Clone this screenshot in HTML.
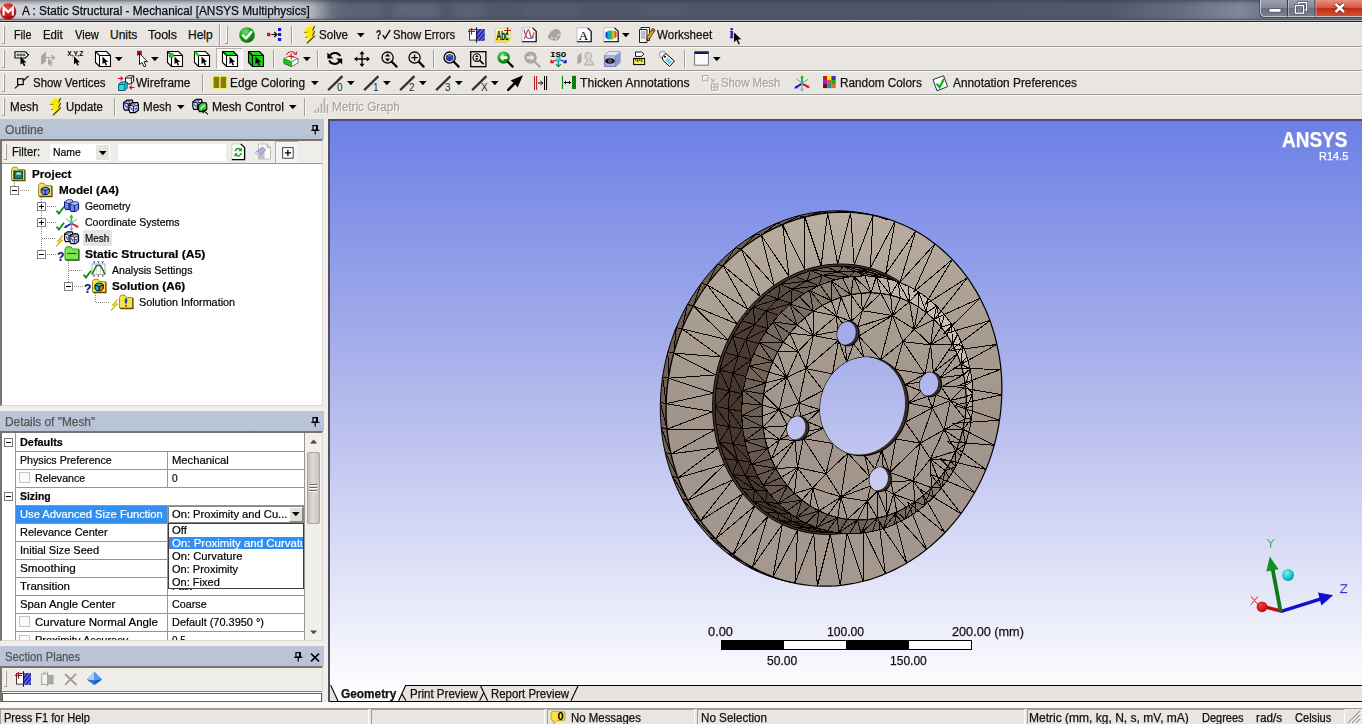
<!DOCTYPE html>
<html><head><meta charset="utf-8"><title>A : Static Structural - Mechanical [ANSYS Multiphysics]</title>
<style>
html,body{margin:0;padding:0;}
body{width:1362px;height:724px;overflow:hidden;position:relative;background:#e9e6e1;font-family:"Liberation Sans",sans-serif;font-size:12px;color:#000;}
.a{position:absolute;}
.t{-webkit-text-stroke:.25px currentColor;position:absolute;white-space:nowrap;line-height:14px;height:14px;font-size:12px;color:#111;transform-origin:0 0;}
.g{color:#a9a6a2;}
.tr{-webkit-text-stroke:.2px currentColor;position:absolute;white-space:nowrap;line-height:13px;height:13px;font-size:11px;color:#000;transform-origin:0 0;}
.b{font-weight:bold;}
.hl{position:absolute;left:0;width:1362px;height:1px;}
.dd{position:absolute;width:0;height:0;border-left:3.5px solid transparent;border-right:3.5px solid transparent;border-top:4px solid #000;}
.vs{position:absolute;width:1px;height:18px;background:#a5a19c;border-right:1px solid #fff;}
.grip{position:absolute;width:2px;height:19px;border-left:1px solid #fff;border-right:1px solid #9a9691;box-sizing:border-box;}
svg{position:absolute;overflow:visible;}
</style></head><body>
<!-- title bar placeholder -->
<!-- toolbars bg -->
<div class="a" style="left:0;top:22px;width:1362px;height:97px;background:#e9e6e1;"></div>
<div class="hl" style="top:46px;background:#9c9893;"></div><div class="hl" style="top:47px;background:#fbfaf9;"></div>
<div class="hl" style="top:70px;background:#9c9893;"></div><div class="hl" style="top:71px;background:#fbfaf9;"></div>
<div class="hl" style="top:94px;background:#9c9893;"></div><div class="hl" style="top:95px;background:#fbfaf9;"></div>
<!-- viewport -->
<div class="a" style="left:328px;top:119px;width:1034px;height:583px;background:#5c5868;"></div>
<div class="a" id="vp" style="left:330px;top:120px;width:1032px;height:566px;background:linear-gradient(180deg,#6a7be3 0%,#8b97e8 25%,#a9b2ee 50%,#cdd2f5 75%,#f4f5fd 96%,#fbfbff 100%);"></div>
<!-- tabs strip -->
<div class="a" style="left:330px;top:686px;width:1032px;height:1px;background:#1a1a1a;"></div>
<div class="a" style="left:330px;top:687px;width:1032px;height:14px;background:#e9e6e1;"></div>
<div class="a" style="left:330px;top:701px;width:1032px;height:1px;background:#1a1a1a;"></div>
<!-- left panel -->
<div class="a" style="left:0;top:119px;width:328px;height:583px;background:#f1efec;"></div>
<div class="a" style="left:0;top:119px;width:324px;height:20px;background:linear-gradient(180deg,#bcc5d6 0,#bbc5d8 50%,#b8c2d5 100%);"></div>
<div class="a" style="left:0;top:139px;width:323px;height:267px;background:#fff;border-left:2px solid #7a726c;border-top:2px solid #7a726c;border-right:1px solid #dcd8d4;border-bottom:1px solid #dcd8d4;box-sizing:border-box;"></div>
<div class="a" style="left:2px;top:141px;width:320px;height:22px;background:#efede9;"></div>
<div class="a" style="left:2px;top:163px;width:320px;height:1px;background:#9a9590;"></div>
<div class="a" style="left:0;top:411px;width:324px;height:20px;background:linear-gradient(180deg,#bcc5d6 0,#bbc5d8 50%,#b8c2d5 100%);"></div>
<div class="a" style="left:0;top:431px;width:323px;height:210px;background:#fff;border-left:2px solid #7a726c;border-top:2px solid #7a726c;border-right:1px solid #dcd8d4;border-bottom:1px solid #dcd8d4;box-sizing:border-box;"></div>
<div class="a" style="left:0;top:646px;width:324px;height:20px;background:linear-gradient(180deg,#bcc5d6 0,#bbc5d8 50%,#b8c2d5 100%);"></div>
<div class="a" style="left:0;top:666px;width:323px;height:36px;background:#efede9;border-left:2px solid #7a726c;border-top:2px solid #7a726c;border-right:1px solid #dcd8d4;box-sizing:border-box;"></div>
<div class="a" style="left:2px;top:691px;width:320px;height:1px;background:#8a827c;"></div><div class="a" style="left:2px;top:692px;width:320px;height:1px;background:#fbfaf9;"></div>
<div class="a" style="left:2px;top:693px;width:320px;height:9px;background:#fff;border:1px solid #6a625c;box-sizing:border-box;"></div>
<!-- status bar -->
<div class="a" style="left:0;top:702px;width:1362px;height:22px;background:#e9e6e1;"></div>
<div class="a" style="left:0;top:0;width:1362px;height:21px;background:linear-gradient(90deg,#555d70 0,#505768 500px,#4e5567 900px,#505869 1110px,#666d7e 1180px,#828898 1240px,#70778a 1262px);"></div><div class="a" style="left:345px;top:3px;width:40px;height:15px;border-radius:8px;background:rgba(160,170,195,0.16);filter:blur(4px);"></div><div class="a" style="left:392px;top:3px;width:48px;height:15px;border-radius:8px;background:rgba(160,170,195,0.2);filter:blur(4px);"></div><div class="a" style="left:452px;top:3px;width:34px;height:15px;border-radius:8px;background:rgba(160,170,195,0.14);filter:blur(4px);"></div><div class="a" style="left:520px;top:3px;width:60px;height:15px;border-radius:8px;background:rgba(160,170,195,0.08);filter:blur(4px);"></div><div class="a" style="left:640px;top:3px;width:50px;height:15px;border-radius:8px;background:rgba(160,170,195,0.06);filter:blur(4px);"></div><div class="a" style="left:0;top:0;width:352px;height:21px;background:linear-gradient(90deg,rgba(208,210,216,1) 0,rgba(210,212,218,1) 150px,rgba(200,203,210,1) 290px,rgba(190,193,202,.85) 312px,rgba(150,155,170,.35) 332px,rgba(120,128,145,0) 352px);"></div><div class="a" style="left:0;top:0;width:1362px;height:21px;background:linear-gradient(180deg,rgba(50,56,76,.55) 0,rgba(60,66,86,.18) 3px,rgba(60,66,86,0) 6px,rgba(60,66,86,0) 16px,rgba(50,54,70,.25) 20px);"></div><div class="hl" style="top:19px;background:rgba(86,87,98,.8);"></div><div class="hl" style="top:20px;background:#b0b0b6;"></div><div class="hl" style="top:21px;background:#222024;"></div><div class="hl" style="top:22px;background:#f6f2f0;"></div><svg style="left:0px;top:3px" width="17" height="17" viewBox="0 0 17 17"><defs><radialGradient id="gApp" cx="40%" cy="30%" r="75%"><stop offset="0" stop-color="#f05048"/><stop offset=".6" stop-color="#d01818"/><stop offset="1" stop-color="#900808"/></radialGradient></defs><circle cx="8.2" cy="8.4" r="8.1" fill="url(#gApp)"/><path d="M3.6 12.4V4.6L8.2 9L12.8 4.6V12.4" stroke="#fff" stroke-width="2.2" fill="none" stroke-linejoin="miter"/></svg>
<div class="t" style="left:22.00px;top:4px;transform:scaleX(0.9829);color:#0a0a10;">A : Static Structural - Mechanical [ANSYS Multiphysics]</div>
<svg style="left:1258px;top:0" width="104" height="20" viewBox="0 0 104 20">
<defs><linearGradient id="gBtn" x1="0" y1="0" x2="0" y2="1"><stop offset="0" stop-color="#9aa0ac"/><stop offset=".45" stop-color="#848a98"/><stop offset=".5" stop-color="#6a7080"/><stop offset="1" stop-color="#7a8090"/></linearGradient>
<linearGradient id="gCls" x1="0" y1="0" x2="0" y2="1"><stop offset="0" stop-color="#e89080"/><stop offset=".45" stop-color="#d45a44"/><stop offset=".5" stop-color="#c02c14"/><stop offset="1" stop-color="#d8502c"/></linearGradient></defs>
<path d="M1.5 -1V13Q1.5 17.5 6 17.5H104V-1Z" fill="#2a2e3a"/>
<path d="M2.5 0V13Q2.5 16.5 6 16.5H57V0Z" fill="url(#gBtn)"/>
<path d="M57 0H104V16.5H57Z" fill="url(#gCls)"/>
<path d="M2.5 0V13Q2.5 16.5 6 16.5H104" fill="none" stroke="#d4d8e0" stroke-width="1" opacity=".85"/>
<path d="M29.5 0V16.5M57 0V16.5" stroke="#3a3e4a" stroke-width="1"/><path d="M30.5 0V16M58 0V16" stroke="#c8ccd4" stroke-width="1" opacity=".6"/>
<rect x="11" y="8.6" width="12" height="3.6" fill="#fff" stroke="#444a58" stroke-width=".8"/>
<rect x="40.4" y="2.6" width="8.2" height="7.6" fill="none" stroke="#444a58" stroke-width="2.6"/><rect x="40.4" y="2.6" width="8.2" height="7.6" fill="none" stroke="#fff" stroke-width="1.3"/>
<rect x="37.4" y="5.6" width="8.2" height="7.6" fill="#7a8090" stroke="#444a58" stroke-width="2.6"/><rect x="37.4" y="5.6" width="8.2" height="7.6" fill="none" stroke="#fff" stroke-width="1.3"/>
<path d="M77.6 4L86 12M86 4L77.6 12" stroke="#5a2018" stroke-width="4.2"/><path d="M77.6 4L86 12M86 4L77.6 12" stroke="#fff" stroke-width="2.6"/>
</svg>
<svg width="0" height="0" style="left:0;top:0"><defs>
<radialGradient id="gGreen" cx="40%" cy="30%" r="75%"><stop offset="0" stop-color="#6fe06f"/><stop offset=".55" stop-color="#18a018"/><stop offset="1" stop-color="#056005"/></radialGradient>
<radialGradient id="gGray" cx="40%" cy="30%" r="75%"><stop offset="0" stop-color="#c4c1bd"/><stop offset="1" stop-color="#9f9b97"/></radialGradient>
<linearGradient id="gBolt" x1="0" y1="0" x2="1" y2="1"><stop offset="0" stop-color="#fff64a"/><stop offset="1" stop-color="#e8d000"/></linearGradient>
<linearGradient id="gCont" x1="0" y1="0" x2="1" y2="0"><stop offset="0" stop-color="#1020d0"/><stop offset=".3" stop-color="#10b0e0"/><stop offset=".5" stop-color="#20c040"/><stop offset=".7" stop-color="#e0d020"/><stop offset="1" stop-color="#e02010"/></linearGradient>
<pattern id="hatch" width="3" height="3" patternUnits="userSpaceOnUse" patternTransform="rotate(40)"><rect width="3" height="3" fill="#1c1cb0"/><rect width="1.2" height="3" fill="#7c7cf0"/></pattern>
</defs></svg>
<div class="a" style="left:3px;top:26px;width:1px;height:18px;background:#fdfdfc;"></div><div class="a" style="left:4px;top:26px;width:1px;height:18px;background:#a09c97;"></div><div class="a" style="left:2px;top:43px;width:3px;height:1px;background:#a09c97;"></div>
<div class="t" style="left:14.00px;top:28px;transform:scaleX(0.9000);">File</div>
<div class="t" style="left:43.00px;top:28px;transform:scaleX(0.9524);">Edit</div>
<div class="t" style="left:75.00px;top:28px;transform:scaleX(0.9231);">View</div>
<div class="t" style="left:110.00px;top:28px;transform:scaleX(1.0000);">Units</div>
<div class="t" style="left:148.00px;top:28px;transform:scaleX(1.0357);">Tools</div>
<div class="t" style="left:188.00px;top:28px;transform:scaleX(1.0000);">Help</div>
<div class="a" style="left:219px;top:24px;width:1px;height:22px;background:#a29e99;"></div><div class="a" style="left:220px;top:24px;width:1px;height:22px;background:#fbfaf9;"></div>
<div class="a" style="left:226px;top:26px;width:1px;height:18px;background:#fdfdfc;"></div><div class="a" style="left:227px;top:26px;width:1px;height:18px;background:#a09c97;"></div><div class="a" style="left:225px;top:43px;width:3px;height:1px;background:#a09c97;"></div>
<svg style="left:239px;top:27px" width="16" height="16" viewBox="0 0 16 16"><circle cx="8" cy="8" r="7.8" fill="url(#gGreen)"/><path d="M4 8.4L7 11.4L12.4 5" stroke="#fff" stroke-width="2.4" fill="none" stroke-linecap="round" stroke-linejoin="round"/></svg>
<svg style="left:265px;top:27px" width="18" height="16" viewBox="0 0 18 16"><rect x="2" y="5.8" width="3.4" height="3.4" fill="#e01010"/><path d="M6.4 7.5H11.6M9.2 5L11.8 7.5L9.2 10" stroke="#000" stroke-width="1.2" fill="none"/><rect x="13" y="1" width="3.2" height="3" fill="#1212d2"/><rect x="13" y="6" width="3.2" height="3" fill="#1212d2"/><rect x="13" y="11" width="3.2" height="3" fill="#1212d2"/></svg>
<div class="a" style="left:291px;top:26px;width:1px;height:18px;background:#a29e99;"></div><div class="a" style="left:292px;top:26px;width:1px;height:18px;background:#fbfaf9;"></div>
<svg style="left:303px;top:25px" width="14" height="19" viewBox="0 0 14 19"><path d="M2.8 2.6Q6 .4 11.6 .8L9.6 5.4L11.6 6.2L9.6 10.4L11.6 11L4 18.2L5.6 13H2.2L3.4 8.2H1.2Z" fill="#f8ea08" stroke="#fbf27a" stroke-width=".8"/><path d="M11.5 1.4L9.7 5.2M11.5 6.4L9.7 10.2M11.6 11L4.2 18" stroke="#4a4000" stroke-width="1.1" stroke-linecap="round"/><path d="M.8 7.4H4.4M2 12.4H4.2" stroke="#9a8800" stroke-width="1"/></svg>
<div class="t" style="left:319.00px;top:28px;transform:scaleX(0.9667);">Solve</div>
<svg style="left:357px;top:33px" width="8" height="5" viewBox="0 0 8 5"><path d="M0 0H7.6L3.8 4.2Z" fill="#000"/></svg>
<div class="t b" style="left:376.00px;top:28px;transform:scaleX(0.7143);">?</div>
<svg style="left:382px;top:29px" width="9" height="11" viewBox="0 0 9 11"><path d="M.8 6.2L3 9.4L8.2 .8" stroke="#111" stroke-width="1.5" fill="none"/></svg>
<div class="t" style="left:393.00px;top:28px;transform:scaleX(0.9394);">Show Errors</div>
<svg style="left:468px;top:27px" width="17" height="16" viewBox="0 0 17 16"><rect x="1.5" y="2.5" width="14.5" height="10.6" fill="#fff" stroke="#4a3c38" stroke-width="1"/><rect x="8.5" y="2" width="8" height="11.6" fill="url(#hatch)"/><path d="M8.5 .2V15.8" stroke="#1a1a40" stroke-width="1.1"/><path d="M0 4.4H7M3.5 1V7.8" stroke="#b81414" stroke-width="1.2"/></svg>
<svg style="left:494px;top:26px" width="18" height="18" viewBox="0 0 18 18"><defs><linearGradient id="gNote" x1="0" y1="0" x2="0" y2="1"><stop offset="0" stop-color="#fdfbd0"/><stop offset=".6" stop-color="#faf270"/><stop offset="1" stop-color="#f6ea20"/></linearGradient></defs><path d="M1.2 2.4H16.6V12.6L13 16.4H1.2Z" fill="url(#gNote)" stroke="#c8c090" stroke-width=".6"/><path d="M13 16.4L13.6 13L16.6 12.6Z" fill="#d8cc30"/><path d="M10.2 4.5H16.8M13.5 1.2V7.8" stroke="#b01010" stroke-width="1.2"/><text x="2.6" y="13.8" font-family="Liberation Sans" font-size="12.5" textLength="11.8" lengthAdjust="spacingAndGlyphs" fill="#000" stroke="#000" stroke-width=".35">Abc</text></svg>
<svg style="left:521px;top:27px" width="17" height="16" viewBox="0 0 17 16"><path d="M1 .8H11.5L15 4.2V14.5H1Z" fill="#fff" stroke="#b8b4b0" stroke-width=".8"/><path d="M11.5 .8L15 4.2M15.2 4V14.8H.8" fill="none" stroke="#000" stroke-width="1.1"/><path d="M3 2.4C4 8 5 11.5 8 11.5S12 10.5 13 9.6" stroke="#4060c8" stroke-width="1.2" fill="none"/><path d="M3.2 12C5 9 6 2.8 7.4 2.8S9 10.6 10.4 10.6S12 7 13.4 5.6" stroke="#e04848" stroke-width="1.4" fill="none"/></svg>
<svg style="left:546px;top:27px" width="17" height="16" viewBox="0 0 17 16"><path d="M2 11C1 8 6 2 11 2C15 3 16 8 13 12C11 14.5 6 14 2 11Z" fill="#a9a5a1"/><circle cx="6" cy="11" r="1" fill="#e9e6e1"/><circle cx="10" cy="11.6" r="1" fill="#e9e6e1"/><circle cx="12.5" cy="8" r="1" fill="#e9e6e1"/></svg>
<svg style="left:576px;top:27px" width="17" height="16" viewBox="0 0 17 16"><path d="M1 .8H11.5L15 4.2V14.5H1Z" fill="#fff" stroke="#b8b4b0" stroke-width=".8"/><path d="M11.5 .8L15 4.2M15.2 4V14.8H.8" fill="none" stroke="#000" stroke-width="1.1"/><text x="2.6" y="12.6" font-family="Liberation Serif" font-size="13.5" fill="#000">A</text></svg>
<svg style="left:603px;top:27px" width="17" height="16" viewBox="0 0 17 16"><path d="M1 .8H11.5L15 4.2V14.5H1Z" fill="#fff" stroke="#b8b4b0" stroke-width=".8"/><path d="M11.5 .8L15 4.2M15.2 4V14.8H.8" fill="none" stroke="#000" stroke-width="1.1"/><path d="M2.5 5.5L6 3.5H12L13.5 5V10L10 12.5H5L2.5 10.5Z" fill="url(#gCont)"/></svg>
<svg style="left:622px;top:33px" width="8" height="5" viewBox="0 0 8 5"><path d="M0 0H7.6L3.8 4.2Z" fill="#000"/></svg>
<svg style="left:638px;top:26px" width="18" height="18" viewBox="0 0 18 18"><path d="M3 1.5H11.5V14.5H3Z" fill="#fff" stroke="#222" stroke-width="1"/><path d="M1.5 3.5H9V16.5H1.5Z" fill="#f4f2ee" stroke="#222" stroke-width="1"/><path d="M3 6H7.5M3 8H7.5M3 10H7.5M3 12H7.5" stroke="#777" stroke-width=".8"/><path d="M8.5 14L9.5 10.5L14.5 2.5L17 4L12 12Z" fill="#e8b020" stroke="#4a3000" stroke-width=".9"/><path d="M14.5 2.5L17 4L16 5.6L13.5 4.1Z" fill="#e07070" stroke="#4a3000" stroke-width=".7"/></svg>
<div class="t" style="left:657.00px;top:28px;transform:scaleX(0.9655);">Worksheet</div>
<div class="t b" style="left:729.5px;top:25px;font-family:'Liberation Serif',serif;font-size:15px;line-height:16px;color:#1414c8;">i</div>
<svg style="left:733px;top:31px" width="11" height="16" viewBox="0 0 11 16"><path d="M.6 .6V12L3.4 9.6L5.4 14L7.4 13.1L5.4 8.8H9.2Z" fill="#000" stroke="#fff" stroke-width=".7"/></svg>
<div class="a" style="left:3px;top:50px;width:1px;height:18px;background:#fdfdfc;"></div><div class="a" style="left:4px;top:50px;width:1px;height:18px;background:#a09c97;"></div><div class="a" style="left:2px;top:67px;width:3px;height:1px;background:#a09c97;"></div>
<svg style="left:14px;top:51px" width="16" height="16" viewBox="0 0 16 16"><path d="M1 .8H11.5L14.5 3.8L11.5 7H1Z" fill="#fff" stroke="#000" stroke-width="1.1"/><circle cx="4" cy="3.9" r="1.1" fill="none" stroke="#000" stroke-width=".8"/><circle cx="7" cy="3.9" r="1.1" fill="none" stroke="#000" stroke-width=".8"/><circle cx="10" cy="3.9" r="1.1" fill="none" stroke="#000" stroke-width=".8"/><path transform="translate(6.5,5.6) scale(.9)" d="M0 0V9L2.2 7.2L3.8 10.6L5.4 9.9L3.8 6.6H6.6Z" fill="#000"/></svg>
<svg style="left:40px;top:51px" width="17" height="16" viewBox="0 0 17 16"><path d="M1 5L6 .5V10.5L1 14Z" fill="#a9a5a1"/><path d="M6 6.5H14M11.5 4L14.5 6.5L11.5 9" stroke="#a9a5a1" stroke-width="1.2" fill="none"/><path transform="translate(8,7) scale(.8)" d="M0 0V9L2.2 7.2L3.8 10.6L5.4 9.9L3.8 6.6H6.6Z" fill="#a9a5a1"/></svg>
<svg style="left:67px;top:50px" width="17" height="17" viewBox="0 0 17 17"><text x="0.3" y="6.3" font-family="Liberation Sans" font-weight="bold" font-size="6.6" textLength="16" lengthAdjust="spacingAndGlyphs" fill="#000">X,Y,Z</text><path transform="translate(7,6.2) scale(.9)" d="M0 0V9L2.2 7.2L3.8 10.6L5.4 9.9L3.8 6.6H6.6Z" fill="#000"/></svg>
<svg style="left:95px;top:51px" width="16" height="16" viewBox="0 0 16 16"><path d="M.5 .5H11.5L15.5 4.5V15.5H4.5L.5 11.5Z" fill="#fff"/><path d="M.5 .5H11.5L15.5 4.5H4.5Z" fill="#fff"/><path d="M.5 .5L4.5 4.5V15.5L.5 11.5Z" fill="#fff"/><path d="M.5 .5H11.5L15.5 4.5V15.5H4.5L.5 11.5ZM4.5 15.5V4.5H15.5M.5 .5L4.5 4.5" fill="none" stroke="#000" stroke-width="1.1"/><path transform="translate(7.5,5.5) scale(.85)" d="M0 0V9L2.2 7.2L3.8 10.6L5.4 9.9L3.8 6.6H6.6Z" fill="#000"/></svg>
<svg style="left:115px;top:57px" width="8" height="5" viewBox="0 0 8 5"><path d="M0 0H7.6L3.8 4.2Z" fill="#000"/></svg>
<svg style="left:136px;top:50px" width="13" height="18" viewBox="0 0 13 18"><rect x="1" y=".8" width="4.8" height="4.6" fill="#a01020"/><path d="M3.5 3.5V14.5L6 12.4L8 16.8L10 15.9L8 11.6H11.4Z" fill="#fff" stroke="#000" stroke-width=".9"/></svg>
<svg style="left:151px;top:57px" width="8" height="5" viewBox="0 0 8 5"><path d="M0 0H7.6L3.8 4.2Z" fill="#000"/></svg>
<svg style="left:167px;top:51px" width="16" height="16" viewBox="0 0 16 16"><path d="M.5 .5H11.5L15.5 4.5V15.5H4.5L.5 11.5Z" fill="#fff"/><path d="M.5 .5H11.5L15.5 4.5H4.5Z" fill="#fff"/><path d="M.5 .5L4.5 4.5V15.5L.5 11.5Z" fill="#fff"/><path d="M.5 .5H11.5L15.5 4.5V15.5H4.5L.5 11.5ZM4.5 15.5V4.5H15.5M.5 .5L4.5 4.5" fill="none" stroke="#000" stroke-width="1.1"/><circle cx="4.3" cy="4.3" r="2.4" fill="#20d020" stroke="#0a700a" stroke-width=".5"/><path transform="translate(7.5,5.5) scale(.85)" d="M0 0V9L2.2 7.2L3.8 10.6L5.4 9.9L3.8 6.6H6.6Z" fill="#000"/></svg>
<svg style="left:194px;top:51px" width="16" height="16" viewBox="0 0 16 16"><path d="M.5 .5H11.5L15.5 4.5V15.5H4.5L.5 11.5Z" fill="#fff"/><path d="M.5 .5H11.5L15.5 4.5H4.5Z" fill="#fff"/><path d="M.5 .5L4.5 4.5V15.5L.5 11.5Z" fill="#fff"/><path d="M.5 .5H11.5L15.5 4.5V15.5H4.5L.5 11.5ZM4.5 15.5V4.5H15.5M.5 .5L4.5 4.5" fill="none" stroke="#000" stroke-width="1.1"/><path d="M1 1L4.8 4.8" stroke="#20d020" stroke-width="2.6"/><path transform="translate(7.5,5.5) scale(.85)" d="M0 0V9L2.2 7.2L3.8 10.6L5.4 9.9L3.8 6.6H6.6Z" fill="#000"/></svg>
<div class="a" style="left:216px;top:48px;width:27px;height:21px;background:#f6f4f1;border-left:1px solid #b5b1ac;border-top:1px solid #b5b1ac;border-right:1px solid #fff;border-bottom:1px solid #fff;box-sizing:border-box;"></div>
<svg style="left:222px;top:51px" width="16" height="16" viewBox="0 0 16 16"><path d="M.5 .5H11.5L15.5 4.5V15.5H4.5L.5 11.5Z" fill="#fff"/><path d="M.5 .5H11.5L15.5 4.5H4.5Z" fill="#20d820"/><path d="M.5 .5L4.5 4.5V15.5L.5 11.5Z" fill="#fff"/><path d="M.5 .5H11.5L15.5 4.5V15.5H4.5L.5 11.5ZM4.5 15.5V4.5H15.5M.5 .5L4.5 4.5" fill="none" stroke="#000" stroke-width="1.1"/><path transform="translate(7.5,5.5) scale(.85)" d="M0 0V9L2.2 7.2L3.8 10.6L5.4 9.9L3.8 6.6H6.6Z" fill="#000"/></svg>
<svg style="left:248px;top:51px" width="16" height="16" viewBox="0 0 16 16"><path d="M.5 .5H11.5L15.5 4.5V15.5H4.5L.5 11.5Z" fill="#18d018"/><path d="M.5 .5H11.5L15.5 4.5H4.5Z" fill="#20d820"/><path d="M.5 .5L4.5 4.5V15.5L.5 11.5Z" fill="#10b810"/><path d="M.5 .5H11.5L15.5 4.5V15.5H4.5L.5 11.5ZM4.5 15.5V4.5H15.5M.5 .5L4.5 4.5" fill="none" stroke="#000" stroke-width="1.1"/><path transform="translate(7.5,5.5) scale(.85)" d="M0 0V9L2.2 7.2L3.8 10.6L5.4 9.9L3.8 6.6H6.6Z" fill="#000"/></svg>
<div class="a" style="left:273px;top:50px;width:1px;height:18px;background:#a29e99;"></div><div class="a" style="left:274px;top:50px;width:1px;height:18px;background:#fbfaf9;"></div>
<svg style="left:283px;top:50px" width="17" height="17" viewBox="0 0 17 17"><path d="M1 8.5L6.5 6L15 8.5V13L8.5 16.5L1 13.5Z" fill="#fff" stroke="#555" stroke-width=".8"/><path d="M1 8.5L8.5 11.5V16.5L1 13.5Z" fill="#18c818" stroke="#0a700a" stroke-width=".6"/><path d="M8.5 11.5L15 8.5" stroke="#555" stroke-width=".8"/><path d="M3.5 5A5 4 0 0 1 13 4" stroke="#d01818" stroke-width="1" fill="none"/><path d="M10.5 3.6L13.4 4.6L13.8 1.6" stroke="#d01818" stroke-width="1" fill="none"/><path d="M5.5 6.5H11M8.2 3.8V9.2" stroke="#d01818" stroke-width="1.1"/></svg>
<svg style="left:303px;top:57px" width="8" height="5" viewBox="0 0 8 5"><path d="M0 0H7.6L3.8 4.2Z" fill="#000"/></svg>
<div class="a" style="left:317px;top:50px;width:1px;height:18px;background:#a29e99;"></div><div class="a" style="left:318px;top:50px;width:1px;height:18px;background:#fbfaf9;"></div>
<svg style="left:327px;top:51px" width="16" height="15" viewBox="0 0 16 15"><path d="M13.2 5.2A5.6 5 0 0 0 3 4.6" stroke="#000" stroke-width="2" fill="none"/><path d="M.4 1.4V7.4H6.4Z" fill="#000"/><path d="M2.2 9.4A5.6 5 0 0 0 12.6 10" stroke="#000" stroke-width="2" fill="none"/><path d="M15.2 13.4V7.4H9.2Z" fill="#000"/></svg>
<svg style="left:354px;top:51px" width="16" height="16" viewBox="0 0 16 16"><path d="M8 1V15M1 8H15" stroke="#000" stroke-width="1.3"/><path d="M8 0L5.4 3.2H10.6ZM8 16L5.4 12.8H10.6ZM0 8L3.2 5.4V10.6ZM16 8L12.8 5.4V10.6Z" fill="#000"/></svg>
<svg style="left:381px;top:51px" width="17" height="17" viewBox="0 0 17 17"><circle cx="6.6" cy="6.6" r="5.6" fill="none" stroke="#000" stroke-width="1.3"/><path d="M10.8 10.8L15.6 15.6" stroke="#000" stroke-width="2.2" stroke-linecap="round"/><path d="M6.6 2.6L4 5.6H9.2ZM6.6 10.6L4 7.6H9.2Z" fill="#000"/></svg>
<svg style="left:408px;top:51px" width="17" height="17" viewBox="0 0 17 17"><circle cx="6.6" cy="6.6" r="5.6" fill="none" stroke="#000" stroke-width="1.3"/><path d="M10.8 10.8L15.6 15.6" stroke="#000" stroke-width="2.2" stroke-linecap="round"/><path d="M3.4 6.6H9.8M6.6 3.4V9.8" stroke="#000" stroke-width="1.3"/></svg>
<div class="a" style="left:433px;top:50px;width:1px;height:18px;background:#a29e99;"></div><div class="a" style="left:434px;top:50px;width:1px;height:18px;background:#fbfaf9;"></div>
<svg style="left:443px;top:51px" width="17" height="17" viewBox="0 0 17 17"><circle cx="6.6" cy="6.6" r="5.6" fill="none" stroke="#000" stroke-width="1.3"/><path d="M10.8 10.8L15.6 15.6" stroke="#000" stroke-width="2.2" stroke-linecap="round"/><path d="M3.4 4.8L6.6 3.4L9.8 4.8V8.6L6.6 10L3.4 8.6Z" fill="#2c48c0" stroke="#0c1870" stroke-width=".7"/><path d="M3.4 4.8L6.6 6.2L9.8 4.8M6.6 6.2V10" stroke="#0c1870" stroke-width=".7" fill="none"/><path d="M3.8 5L6.6 3.8L9.4 5L6.6 6Z" fill="#5878e0"/></svg>
<svg style="left:470px;top:51px" width="17" height="17" viewBox="0 0 17 17"><rect x=".7" y=".7" width="15.2" height="15" fill="none" stroke="#000" stroke-width="1.3"/><circle cx="6.8" cy="6.6" r="3.8" fill="none" stroke="#000" stroke-width="1.1"/><path d="M9.6 9.4L13.6 13.2" stroke="#000" stroke-width="1.6"/><path d="M6.8 4L5 6H8.6ZM6.8 9.2L5 7.2H8.6Z" fill="#000"/></svg>
<svg style="left:497px;top:51px" width="17" height="17" viewBox="0 0 17 17"><circle cx="6.6" cy="6.6" r="6.2" fill="url(#gGreen)"/><path d="M11 11L15.6 15.6" stroke="#000" stroke-width="2.2" stroke-linecap="round"/><path d="M2.6 6.6L6.4 3.2V5.2H10.4V8H6.4V10Z" fill="#fff"/></svg>
<svg style="left:524px;top:51px" width="17" height="17" viewBox="0 0 17 17"><circle cx="6.6" cy="6.6" r="6.2" fill="#aaa6a2"/><path d="M11 11L15.6 15.6" stroke="#aaa6a2" stroke-width="2.2" stroke-linecap="round"/><path d="M10.6 6.6L6.8 3.2V5.2H2.8V8H6.8V10Z" fill="#e9e6e1"/></svg>
<svg style="left:550px;top:50px" width="17" height="18" viewBox="0 0 17 18"><text x=".2" y="6.6" font-family="Liberation Mono" font-weight="bold" font-size="7.6" textLength="16" lengthAdjust="spacingAndGlyphs" fill="#000">ISO</text><path d="M7.2 10L1 11.6M1 9.8V12.6H3.6" stroke="#d01010" stroke-width="1.2" fill="none"/><path d="M9.6 10L16 11.6M16 9.8V12.6H13.4" stroke="#1010d0" stroke-width="1.2" fill="none"/><path d="M8.4 10V16.6M6 14.2L8.4 16.8L10.8 14.2" stroke="#108030" stroke-width="1.1" fill="none"/><circle cx="8.4" cy="9.4" r="2.6" fill="#20c8d8"/><circle cx="7.6" cy="8.6" r=".9" fill="#a0f0f8"/></svg>
<svg style="left:577px;top:51px" width="18" height="16" viewBox="0 0 18 16"><path d="M.5 5L4.5 1.5V11L.5 13.5Z" fill="#aaa6a2"/><path d="M9 2C12 .5 15 2 14.5 5.5C14.3 7 13 8 13 9C14.5 9.5 16.5 11 16.5 14H8C8 12 9 10.5 10.5 9.5C8.5 8.5 7 4 9 2Z" fill="#d8d5d1" stroke="#aaa6a2" stroke-width="1"/></svg>
<svg style="left:604px;top:51px" width="17" height="16" viewBox="0 0 17 16"><path d="M.6 4.5L5 .8H16V11.5L11.6 15.4H.6Z" fill="#aab4e4" stroke="#5a64a0" stroke-width=".8"/><path d="M.6 4.5H11.6V15.4M11.6 4.5L16 .8" fill="none" stroke="#5a64a0" stroke-width=".8"/><path d="M.6 4.5L5 .8H16L11.6 4.5Z" fill="#e0e4f8"/><path d="M11.6 4.5L16 .8V11.5L11.6 15.4Z" fill="#8c98d0"/><ellipse cx="6" cy="10" rx="4.8" ry="2.7" fill="#181818"/><ellipse cx="6" cy="10" rx="1.7" ry="1.7" fill="#8890b8"/><circle cx="6" cy="10" r=".8" fill="#000"/></svg>
<svg style="left:633px;top:51px" width="13" height="15" viewBox="0 0 13 15"><path d="M2.5 1H8.5L11 3.2L8.5 5.4H2.5Z" fill="#fff" stroke="#000" stroke-width=".9"/><rect x=".6" y="7.4" width="11" height="6.2" fill="#f8f060" stroke="#000" stroke-width="1"/><path d="M2.8 7.6V10M4.8 7.6V11M6.8 7.6V10M8.8 7.6V11" stroke="#000" stroke-width=".9"/></svg>
<svg style="left:658px;top:50px" width="18" height="18" viewBox="0 0 18 18"><circle cx="4.6" cy="4.6" r="3.4" fill="none" stroke="#999" stroke-width=".9"/><path d="M4.2 7.2L7.8 3.6L16.4 11L11.6 16.4L4.8 10.2Z" fill="#fff" stroke="#000" stroke-width="1"/><circle cx="7" cy="6.8" r="1" fill="#000"/><path d="M9.6 7.6L14 11.4L11.4 14.2L7.4 10.4Z" fill="#58b8f0"/><path d="M8.5 9L12.7 12.8M10.6 8.5L8.4 11.3M12.3 10L10 12.8" stroke="#d8f0ff" stroke-width=".5"/></svg>
<div class="a" style="left:684px;top:50px;width:1px;height:18px;background:#a29e99;"></div><div class="a" style="left:685px;top:50px;width:1px;height:18px;background:#fbfaf9;"></div>
<svg style="left:694px;top:51px" width="15" height="15" viewBox="0 0 15 15"><rect x=".6" y=".6" width="13.8" height="13.6" fill="#fbfbfd" stroke="#777" stroke-width="1"/><rect x=".6" y=".6" width="13.8" height="2.4" fill="#101860"/></svg>
<svg style="left:713px;top:57px" width="8" height="5" viewBox="0 0 8 5"><path d="M0 0H7.6L3.8 4.2Z" fill="#000"/></svg>
<div class="a" style="left:3px;top:74px;width:1px;height:18px;background:#fdfdfc;"></div><div class="a" style="left:4px;top:74px;width:1px;height:18px;background:#a09c97;"></div><div class="a" style="left:2px;top:91px;width:3px;height:1px;background:#a09c97;"></div>
<svg style="left:14px;top:75px" width="16" height="15" viewBox="0 0 16 15"><path d="M.8 13.4L5 9.6M9 6L14.6 .8" stroke="#000" stroke-width="1.1"/><rect x="3.6" y="3.8" width="5.6" height="5.8" fill="#e9e6e1" stroke="#000" stroke-width="1.2"/></svg>
<div class="t" style="left:32.50px;top:76px;transform:scaleX(0.9539);">Show Vertices</div>
<svg style="left:118px;top:75px" width="17" height="16" viewBox="0 0 17 16"><g transform="translate(7.5,0.8) scale(0.9)"><path d="M0 2.5L2.5 0H9V6.5L6.5 9H0Z" fill="#fff" stroke="#000" stroke-width="1"/><path d="M0 2.5H6.5V9M6.5 2.5L9 0" fill="none" stroke="#000" stroke-width="1"/></g><g transform="translate(0.6,7) scale(0.95)"><path d="M0 2.5L2.5 0H9V6.5L6.5 9H0Z" fill="#20e0e8" stroke="#0a5060" stroke-width="1"/><path d="M0 2.5H6.5V9M6.5 2.5L9 0" fill="none" stroke="#0a5060" stroke-width="1"/></g><path d="M0 3.5H4.5M2.6 1.6L4.6 3.5L2.6 5.4" stroke="#d01020" stroke-width="1.1" fill="none"/><path d="M16.5 12.5H11.8M13.8 10.6L11.8 12.5L13.8 14.4" stroke="#d01020" stroke-width="1.1" fill="none"/></svg>
<div class="t" style="left:136.00px;top:76px;transform:scaleX(0.9821);">Wireframe</div>
<div class="a" style="left:202px;top:74px;width:1px;height:18px;background:#a29e99;"></div><div class="a" style="left:203px;top:74px;width:1px;height:18px;background:#fbfaf9;"></div>
<svg style="left:212px;top:75px" width="16" height="15" viewBox="0 0 16 15"><rect x=".2" y=".6" width="15.4" height="13.6" rx="1.5" fill="#f4f470"/><rect x="1.6" y="1.8" width="5.6" height="11.2" fill="#8a7a08"/><rect x="8.6" y="1.8" width="5.6" height="11.2" fill="#8a7a08"/></svg>
<div class="t" style="left:230.00px;top:76px;transform:scaleX(0.9868);">Edge Coloring</div>
<svg style="left:311px;top:81px" width="8" height="5" viewBox="0 0 8 5"><path d="M0 0H7.6L3.8 4.2Z" fill="#000"/></svg>
<svg style="left:328px;top:75px" width="16" height="16" viewBox="0 0 16 16"><path d="M1 14.4L13.6 2" stroke="#3a302c" stroke-width="2.3" stroke-linecap="square"/><text x="9" y="15.6" font-family="Liberation Sans" font-size="10" fill="#2a2624">0</text></svg>
<svg style="left:347px;top:81px" width="8" height="5" viewBox="0 0 8 5"><path d="M0 0H7.6L3.8 4.2Z" fill="#000"/></svg>
<svg style="left:364px;top:75px" width="16" height="16" viewBox="0 0 16 16"><path d="M1 14.4L13.6 2" stroke="#3a302c" stroke-width="2.3" stroke-linecap="square"/><text x="9" y="15.6" font-family="Liberation Sans" font-size="10" fill="#2a2624">1</text></svg>
<svg style="left:383px;top:81px" width="8" height="5" viewBox="0 0 8 5"><path d="M0 0H7.6L3.8 4.2Z" fill="#000"/></svg>
<svg style="left:400px;top:75px" width="16" height="16" viewBox="0 0 16 16"><path d="M1 14.4L13.6 2" stroke="#3a302c" stroke-width="2.3" stroke-linecap="square"/><text x="9" y="15.6" font-family="Liberation Sans" font-size="10" fill="#2a2624">2</text></svg>
<svg style="left:419px;top:81px" width="8" height="5" viewBox="0 0 8 5"><path d="M0 0H7.6L3.8 4.2Z" fill="#000"/></svg>
<svg style="left:436px;top:75px" width="16" height="16" viewBox="0 0 16 16"><path d="M1 14.4L13.6 2" stroke="#3a302c" stroke-width="2.3" stroke-linecap="square"/><text x="9" y="15.6" font-family="Liberation Sans" font-size="10" fill="#2a2624">3</text></svg>
<svg style="left:455px;top:81px" width="8" height="5" viewBox="0 0 8 5"><path d="M0 0H7.6L3.8 4.2Z" fill="#000"/></svg>
<svg style="left:472px;top:75px" width="16" height="16" viewBox="0 0 16 16"><path d="M1 14.4L13.6 2" stroke="#3a302c" stroke-width="2.3" stroke-linecap="square"/><text x="9" y="15.6" font-family="Liberation Sans" font-size="10" fill="#2a2624">X</text></svg>
<svg style="left:491px;top:81px" width="8" height="5" viewBox="0 0 8 5"><path d="M0 0H7.6L3.8 4.2Z" fill="#000"/></svg>
<svg style="left:507px;top:75px" width="17" height="16" viewBox="0 0 17 16"><path d="M1.2 14.8L9 7" stroke="#000" stroke-width="2.6" stroke-linecap="round"/><path d="M16 .2L3.6 5.6L7.6 8.4L10.6 12.6Z" fill="#000"/></svg>
<svg style="left:533px;top:75px" width="15" height="16" viewBox="0 0 15 16"><path d="M1.5 1V15M3.6 1V15" stroke="#b01820" stroke-width="1"/><path d="M11.5 1V15M13.6 1V15" stroke="#000" stroke-width="1"/><path d="M5 8H9.6M7.6 6L9.8 8L7.6 10" stroke="#000" stroke-width="1" fill="none"/></svg>
<svg style="left:561px;top:75px" width="16" height="15" viewBox="0 0 16 15"><path d="M1.5 .8V14" stroke="#108010" stroke-width="1.1"/><rect x="11" y=".8" width="4" height="13.2" fill="#0a800a"/><path d="M3.4 7.5H9.6M5 6L3.4 7.5L5 9M8 6L9.6 7.5L8 9" stroke="#000" stroke-width="1" fill="none"/></svg>
<div class="t" style="left:579.50px;top:76px;transform:scaleX(1.0139);">Thicken Annotations</div>
<svg style="left:702px;top:75px" width="18" height="17" viewBox="0 0 18 17"><g transform="translate(1,1)" stroke="#fff" fill="none" stroke-width="1"><rect x=".5" y=".5" width="5.4" height="5.4"/><path d="M7.6 2.6L12 6.6M12 3.6V6.8H8.8"/><rect x="9.5" y="9" width="6.4" height="6.2"/><path d="M12.7 9V15.2M9.5 12.1H15.9"/></g><g stroke="#aaa6a2" fill="none" stroke-width="1"><rect x=".5" y=".5" width="5.4" height="5.4"/><path d="M7.6 2.6L12 6.6M12 3.6V6.8H8.8"/><rect x="9.5" y="9" width="6.4" height="6.2"/><path d="M12.7 9V15.2M9.5 12.1H15.9"/></g></svg>
<div class="t g" style="left:720.50px;top:76px;font-size:12px;transform:scaleX(0.9444);text-shadow:1px 1px 0 #fff;">Show Mesh</div>
<svg style="left:794px;top:75px" width="17" height="17" viewBox="0 0 17 17"><path d="M8 8L2.6 4M8 8L14 4.4M8 8V15.6M6.4 13.6L8 16L9.6 13.6" stroke="#8a8a8a" stroke-width=".9" fill="none"/><path d="M8 8.6V1.6" stroke="#20c030" stroke-width="2"/><path d="M8 0L6 3H10Z" fill="#20c030"/><path d="M8 8.6L1.6 12.6" stroke="#1818d8" stroke-width="2"/><path d="M0 13.6L3.4 13.2L2 10.8Z" fill="#1818d8"/><path d="M8 8.6L14.4 12" stroke="#d81818" stroke-width="2"/><path d="M16 13L12.6 12.8L14 10.2Z" fill="#d81818"/><circle cx="8" cy="8.4" r="1.4" fill="#20b8c8"/></svg>
<svg style="left:823px;top:76px" width="13" height="12" viewBox="0 0 13 12"><rect x="0.0" y="0.0" width="4.3" height="4.1" fill="#d01818"/><rect x="4.2" y="0.0" width="4.3" height="4.1" fill="#f8f010"/><rect x="8.4" y="0.0" width="4.3" height="4.1" fill="#3030c8"/><rect x="0.0" y="4.0" width="4.3" height="4.1" fill="#a020c0"/><rect x="4.2" y="4.0" width="4.3" height="4.1" fill="#c06820"/><rect x="8.4" y="4.0" width="4.3" height="4.1" fill="#20a820"/><rect x="0.0" y="8.0" width="4.3" height="4.1" fill="#800808"/><rect x="4.2" y="8.0" width="4.3" height="4.1" fill="#2090b0"/><rect x="8.4" y="8.0" width="4.3" height="4.1" fill="#d87020"/></svg>
<div class="t" style="left:839.50px;top:76px;transform:scaleX(0.9819);">Random Colors</div>
<svg style="left:932px;top:75px" width="17" height="17" viewBox="0 0 17 17"><path d="M1 4.6L11.6 .8L15.6 11.6L5 15.8Z" fill="#fff" stroke="#203050" stroke-width="1"/><path d="M4.6 8.6L7.6 12.2L12 3.8" stroke="#18b018" stroke-width="2.2" fill="none"/></svg>
<div class="t" style="left:952.50px;top:76px;transform:scaleX(0.9880);">Annotation Preferences</div>
<div class="a" style="left:3px;top:98px;width:1px;height:18px;background:#fdfdfc;"></div><div class="a" style="left:4px;top:98px;width:1px;height:18px;background:#a09c97;"></div><div class="a" style="left:2px;top:115px;width:3px;height:1px;background:#a09c97;"></div>
<div class="t" style="left:9.50px;top:100px;transform:scaleX(0.9655);">Mesh</div>
<svg style="left:49px;top:97px" width="14" height="19" viewBox="0 0 14 19"><path d="M2.8 2.6Q6 .4 11.6 .8L9.6 5.4L11.6 6.2L9.6 10.4L11.6 11L4 18.2L5.6 13H2.2L3.4 8.2H1.2Z" fill="#f8ea08" stroke="#fbf27a" stroke-width=".8"/><path d="M11.5 1.4L9.7 5.2M11.5 6.4L9.7 10.2M11.6 11L4.2 18" stroke="#4a4000" stroke-width="1.1" stroke-linecap="round"/><path d="M.8 7.4H4.4M2 12.4H4.2" stroke="#9a8800" stroke-width="1"/></svg>
<div class="t" style="left:66.00px;top:100px;transform:scaleX(0.9487);">Update</div>
<div class="a" style="left:114px;top:98px;width:1px;height:18px;background:#a29e99;"></div><div class="a" style="left:115px;top:98px;width:1px;height:18px;background:#fbfaf9;"></div>
<svg style="left:123px;top:99px" width="17" height="15" viewBox="0 0 17 15"><g transform="translate(0.6,0.8) scale(1)"><path d="M0 3L3.4 .4H8.6L9.4 3V8L6 10.4H1L0 8Z" fill="#e8e8ff" stroke="#000" stroke-width="1.2"/><path d="M0 3L4.6 4L9.4 3M4.6 4V10.2" stroke="#000" stroke-width=".9" fill="none"/><path d="M1.2 4.4L3.4 8.6M4.6 7L2 6.5M6 8.6L8.2 4.6M5.4 6.2L8.8 7" stroke="#3030c8" stroke-width=".8"/><path d="M2 2.4L7 1.4M3.4 .8L6.6 3.2" stroke="#3030c8" stroke-width=".7"/></g><g transform="translate(6,3.2) scale(1)"><path d="M0 3L3.4 .4H8.6L9.4 3V8L6 10.4H1L0 8Z" fill="#e8e8ff" stroke="#000" stroke-width="1.2"/><path d="M0 3L4.6 4L9.4 3M4.6 4V10.2" stroke="#000" stroke-width=".9" fill="none"/><path d="M1.2 4.4L3.4 8.6M4.6 7L2 6.5M6 8.6L8.2 4.6M5.4 6.2L8.8 7" stroke="#3030c8" stroke-width=".8"/><path d="M2 2.4L7 1.4M3.4 .8L6.6 3.2" stroke="#3030c8" stroke-width=".7"/></g></svg>
<div class="t" style="left:142.50px;top:100px;transform:scaleX(0.9655);">Mesh</div>
<svg style="left:177px;top:105px" width="8" height="5" viewBox="0 0 8 5"><path d="M0 0H7.6L3.8 4.2Z" fill="#000"/></svg>
<svg style="left:192px;top:98px" width="18" height="17" viewBox="0 0 18 17"><g transform="translate(0.8,1) scale(1)"><path d="M0 3L3.4 .4H8.6L9.4 3V8L6 10.4H1L0 8Z" fill="#e8e8ff" stroke="#000" stroke-width="1.2"/><path d="M0 3L4.6 4L9.4 3M4.6 4V10.2" stroke="#000" stroke-width=".9" fill="none"/><path d="M1.2 4.4L3.4 8.6M4.6 7L2 6.5M6 8.6L8.2 4.6M5.4 6.2L8.8 7" stroke="#3030c8" stroke-width=".8"/><path d="M2 2.4L7 1.4M3.4 .8L6.6 3.2" stroke="#3030c8" stroke-width=".7"/></g><g transform="translate(6.4,4.4)"><path d="M0 2.6L3 .4H7.6L8.4 2.6V7L5.4 9.2H1L0 7Z" fill="#30d030" stroke="#000" stroke-width="1.1"/><path d="M2 6.4L6.4 2.6" stroke="#d8ffd8" stroke-width="1.2"/></g><path d="M11.4 12.4L16 16.4M11.2 15.2V12.2H14.4" stroke="#000" stroke-width="1.1" fill="none"/></svg>
<div class="t" style="left:211.50px;top:100px;transform:scaleX(1.0070);">Mesh Control</div>
<svg style="left:289px;top:105px" width="8" height="5" viewBox="0 0 8 5"><path d="M0 0H7.6L3.8 4.2Z" fill="#000"/></svg>
<div class="a" style="left:304px;top:98px;width:1px;height:18px;background:#a29e99;"></div><div class="a" style="left:305px;top:98px;width:1px;height:18px;background:#fbfaf9;"></div>
<svg style="left:314px;top:98px" width="16" height="17" viewBox="0 0 16 17"><g stroke="#fff" stroke-width="1.6" transform="translate(1,1)"><path d="M1.5 15V12M4.5 15V9.4M7.5 15V5.4M10.5 15V.6M13.5 15V6.6"/></g><path d="M1.5 15V12M4.5 15V9.4M7.5 15V5.4M10.5 15V.6M13.5 15V6.6" stroke="#aaa6a2" stroke-width="1.6"/></svg>
<div class="t g" style="left:331.50px;top:100px;font-size:12px;transform:scaleX(0.9783);text-shadow:1px 1px 0 #fff;">Metric Graph</div>
<div class="t" style="left:4.50px;top:123px;transform:scaleX(1.0132);color:#555;">Outline</div>
<svg style="left:311px;top:125px" width="9" height="10" viewBox="0 0 9 10"><path d="M2 .6H6.4V5H2Z" fill="#c9d4e6" stroke="#000" stroke-width="1.2"/><path d="M5.8 .6V5" stroke="#000" stroke-width="1.8"/><path d="M.2 5.4H8.4M4.2 5.4V9.6" stroke="#000" stroke-width="1.2" fill="none"/></svg>
<div class="a" style="left:5px;top:144px;width:1px;height:16px;background:#fdfdfc;"></div><div class="a" style="left:6px;top:144px;width:1px;height:16px;background:#a09c97;"></div><div class="a" style="left:4px;top:159px;width:3px;height:1px;background:#a09c97;"></div>
<div class="t" style="left:11.50px;top:145px;transform:scaleX(0.9333);">Filter:</div>
<div class="a" style="left:50px;top:144px;width:60px;height:17px;background:#fff;"></div><div class="a" style="left:96px;top:145px;width:13px;height:15px;background:#e6e4e0;"></div><div class="tr" style="left:52.50px;top:146px;transform:scaleX(0.9483);">Name</div>
<svg style="left:99px;top:151px" width="8" height="5" viewBox="0 0 8 5"><path d="M0 0H7.6L3.8 4.2Z" fill="#000"/></svg>
<div class="a" style="left:118px;top:144px;width:108px;height:17px;background:#fff;"></div><svg style="left:231px;top:143px" width="15" height="18" viewBox="0 0 15 18"><path d="M1 1H9.8L13.4 4.4V16.4H1Z" fill="#fff" stroke="#c8c4c0" stroke-width=".7"/><path d="M9.8 1L13.4 4.4M13.6 4.2V16.6H.8" fill="none" stroke="#000" stroke-width="1.3"/><path d="M4.2 8.4A3.2 3.2 0 0 1 9.6 6.4" stroke="#18a018" stroke-width="1.5" fill="none"/><path d="M10.9 4.4V8.2H7.2Z" fill="#18a018"/><path d="M10.2 10A3.2 3.2 0 0 1 4.8 12" stroke="#18a018" stroke-width="1.5" fill="none"/><path d="M3.5 14V10.2H7.2Z" fill="#18a018"/></svg>
<svg style="left:254px;top:143px" width="18" height="18" viewBox="0 0 18 18"><path d="M4.5 1H13L16.5 4.4V16H4.5Z" fill="#fbfaf8" stroke="#b8b4b0" stroke-width=".8"/><path d="M4.5 11.5L10.5 6V16H4.5Z" fill="#c4beb6"/><path d="M13 1V4.4H16.5" fill="#d8d4d0" stroke="#a8a4a0" stroke-width=".7"/><path d="M1.4 9.6L8.4 3.8L11.6 7L4.6 13Z" fill="#b4b0e8" stroke="#8480c0" stroke-width=".8"/><path d="M1.4 9.6L4.6 13L5.6 12.1L2.4 8.8Z" fill="#e8e6f8"/></svg>
<div class="a" style="left:275px;top:141px;width:23px;height:22px;background:#f6f4f2;border-left:1px solid #b0aca8;border-top:1px solid #b0aca8;box-sizing:border-box;"></div><svg style="left:282px;top:147px" width="12" height="12" viewBox="0 0 12 12"><rect x=".6" y=".6" width="10.6" height="10.6" fill="#fff" stroke="#444" stroke-width="1"/><path d="M2.8 5.9H9M5.9 2.8V9" stroke="#000" stroke-width="1.3"/></svg>
<svg style="left:0;top:0" width="324" height="406"><path d="M14.5 181V186" stroke="#8a8a8a" stroke-width="1" stroke-dasharray="1 1"/><path d="M20 190.5H30" stroke="#8a8a8a" stroke-width="1" stroke-dasharray="1 1"/><path d="M41.5 197V250" stroke="#8a8a8a" stroke-width="1" stroke-dasharray="1 1"/><path d="M47 206.5H56" stroke="#8a8a8a" stroke-width="1" stroke-dasharray="1 1"/><path d="M47 222.5H56" stroke="#8a8a8a" stroke-width="1" stroke-dasharray="1 1"/><path d="M42 238.5H56" stroke="#8a8a8a" stroke-width="1" stroke-dasharray="1 1"/><path d="M47 254.5H57" stroke="#8a8a8a" stroke-width="1" stroke-dasharray="1 1"/><path d="M68.5 261V282" stroke="#8a8a8a" stroke-width="1" stroke-dasharray="1 1"/><path d="M69 270.5H83" stroke="#8a8a8a" stroke-width="1" stroke-dasharray="1 1"/><path d="M74 286.5H84" stroke="#8a8a8a" stroke-width="1" stroke-dasharray="1 1"/><path d="M95.5 293V302" stroke="#8a8a8a" stroke-width="1" stroke-dasharray="1 1"/><path d="M96 302.5H110" stroke="#8a8a8a" stroke-width="1" stroke-dasharray="1 1"/></svg>
<svg style="left:10px;top:186px" width="9" height="9" viewBox="0 0 9 9"><rect x=".5" y=".5" width="8" height="8" fill="#fff" stroke="#848484" stroke-width="1"/><path d="M2 4.5H7" stroke="#000" stroke-width="1"/></svg>
<svg style="left:37px;top:202px" width="9" height="9" viewBox="0 0 9 9"><rect x=".5" y=".5" width="8" height="8" fill="#fff" stroke="#848484" stroke-width="1"/><path d="M2 4.5H7" stroke="#000" stroke-width="1"/><path d="M4.5 2V7" stroke="#000" stroke-width="1"/></svg>
<svg style="left:37px;top:218px" width="9" height="9" viewBox="0 0 9 9"><rect x=".5" y=".5" width="8" height="8" fill="#fff" stroke="#848484" stroke-width="1"/><path d="M2 4.5H7" stroke="#000" stroke-width="1"/><path d="M4.5 2V7" stroke="#000" stroke-width="1"/></svg>
<svg style="left:37px;top:250px" width="9" height="9" viewBox="0 0 9 9"><rect x=".5" y=".5" width="8" height="8" fill="#fff" stroke="#848484" stroke-width="1"/><path d="M2 4.5H7" stroke="#000" stroke-width="1"/></svg>
<svg style="left:64px;top:282px" width="9" height="9" viewBox="0 0 9 9"><rect x=".5" y=".5" width="8" height="8" fill="#fff" stroke="#848484" stroke-width="1"/><path d="M2 4.5H7" stroke="#000" stroke-width="1"/></svg>
<svg style="left:10px;top:166px" width="16" height="16" viewBox="0 0 16 16"><path d="M1.5 3.5L3 1.2H7L8.5 3.5H14.5V14H1.5Z" fill="#f4e24c" stroke="#8a7a10" stroke-width=".8"/><path d="M15 4V14.6H2.2" stroke="#5a5000" stroke-width="1.2" fill="none"/><rect x="4" y="5" width="8.6" height="7.6" fill="#0c8870" stroke="#033" stroke-width=".9"/><rect x="6.4" y="6.6" width="4.4" height="2" fill="#c8f0e0"/><path d="M3.4 5.6H4.8M3.4 7.6H4.8M3.4 9.6H4.8M3.4 11.6H4.8" stroke="#022" stroke-width=".8"/></svg>
<div class="tr b" style="left:31.50px;top:168px;transform:scaleX(1.0579);">Project</div>
<svg style="left:37px;top:182px" width="16" height="16" viewBox="0 0 16 16"><path d="M1.5 3.5L3 1.2H7L8.5 3.5H14.5V14H1.5Z" fill="#f4e24c" stroke="#8a7a10" stroke-width=".8"/><path d="M15 4V14.6H2.2" stroke="#5a5000" stroke-width="1.2" fill="none"/><path d="M4.2 7L6.4 5.4H10.6L12.4 7V10.6L10 12.6H6L4.2 10.8Z" fill="#7088e0" stroke="#081060" stroke-width="1"/><path d="M4.4 7L8.2 8.6L12.2 7M8.2 8.6V12.4" stroke="#081060" stroke-width=".9" fill="none"/></svg>
<div class="tr b" style="left:59.00px;top:184px;transform:scaleX(1.0649);">Model (A4)</div>
<svg style="left:55.5px;top:205.5px" width="9" height="9" viewBox="0 0 9 9"><path d="M.6 4.6L3 7.6L8 .8" stroke="#0c8c1c" stroke-width="1.8" fill="none"/></svg>
<svg style="left:64px;top:199px" width="16" height="14" viewBox="0 0 16 14"><g transform="translate(0.5,0.6)"><path d="M0 2.4L3 .3H7.6L8.6 2.4V7.6L5.6 10H1L0 7.8Z" fill="#6c8ce8" stroke="#0a1470" stroke-width="1"/><path d="M0 2.4L4.4 3.6L8.6 2.4M4.4 3.6V9.8" stroke="#0a1470" stroke-width=".9" fill="none"/><path d="M.4 2.5L3 .7H7.4L8.2 2.4L4.4 3.4Z" fill="#a8bcf4"/></g><g transform="translate(6,2.6)"><path d="M0 2.4L3 .3H7.6L8.6 2.4V7.6L5.6 10H1L0 7.8Z" fill="#6c8ce8" stroke="#0a1470" stroke-width="1"/><path d="M0 2.4L4.4 3.6L8.6 2.4M4.4 3.6V9.8" stroke="#0a1470" stroke-width=".9" fill="none"/><path d="M.4 2.5L3 .7H7.4L8.2 2.4L4.4 3.4Z" fill="#a8bcf4"/></g></svg>
<div class="tr" style="left:84.80px;top:200px;transform:scaleX(0.9429);">Geometry</div>
<svg style="left:55.5px;top:221.5px" width="9" height="9" viewBox="0 0 9 9"><path d="M.6 4.6L3 7.6L8 .8" stroke="#0c8c1c" stroke-width="1.8" fill="none"/></svg>
<svg style="left:63px;top:214px" width="17" height="17" viewBox="0 0 17 17"><path d="M8.4 9L3 4.6M8.4 9L14 5M8.4 9V16M7 14L8.4 16.4L9.8 14" stroke="#8c8c8c" stroke-width=".9" fill="none"/><path d="M8.4 9.4V2" stroke="#20c838" stroke-width="1.8"/><path d="M8.4 .2L6.4 3.4H10.4Z" fill="#20c838"/><path d="M8.4 9.4L2.4 13" stroke="#2020d8" stroke-width="1.8"/><path d="M.6 14L4 13.8L2.8 11.2Z" fill="#2020d8"/><path d="M8.4 9.4L14.4 12.6" stroke="#d82020" stroke-width="1.8"/><path d="M16.2 13.6L12.8 13.6L14 11Z" fill="#d82020"/><circle cx="8.4" cy="9.2" r="1.3" fill="#20b8c8"/></svg>
<div class="tr" style="left:84.80px;top:216px;transform:scaleX(0.9540);">Coordinate Systems</div>
<div class="a" style="left:83px;top:230px;width:29px;height:16px;background:#e6e4e0;"></div><svg style="left:55px;top:235px" width="9" height="12" viewBox="0 0 9 12"><path d="M7.6 .2L2 6.2H4.6L1 11.8L8 5H5.2Z" fill="#f8e020" stroke="#b09800" stroke-width=".6"/></svg>
<svg style="left:64px;top:231px" width="16" height="14" viewBox="0 0 16 14"><g transform="translate(0.5,0.6)"><path d="M0 2.4L3 .3H7.6L8.6 2.4V7.6L5.6 10H1L0 7.8Z" fill="#f0f0ff" stroke="#000" stroke-width="1.1"/><path d="M0 2.4L4.4 3.6L8.6 2.4M4.4 3.6V9.8" stroke="#000" stroke-width=".8" fill="none"/><path d="M1 4L3.2 8.4M4.2 6.4L1.6 6M5.6 8.4L7.6 4M5 5.8L8.2 6.6M2 1.8L6.6 1.2" stroke="#3030c8" stroke-width=".8"/></g><g transform="translate(6,2.6)"><path d="M0 2.4L3 .3H7.6L8.6 2.4V7.6L5.6 10H1L0 7.8Z" fill="#f0f0ff" stroke="#000" stroke-width="1.1"/><path d="M0 2.4L4.4 3.6L8.6 2.4M4.4 3.6V9.8" stroke="#000" stroke-width=".8" fill="none"/><path d="M1 4L3.2 8.4M4.2 6.4L1.6 6M5.6 8.4L7.6 4M5 5.8L8.2 6.6M2 1.8L6.6 1.2" stroke="#3030c8" stroke-width=".8"/></g></svg>
<div class="tr" style="left:84.80px;top:232px;transform:scaleX(0.8963);">Mesh</div>
<div class="tr b" style="left:57px;top:251px;color:#101878;font-size:12px;">?</div><svg style="left:64px;top:246px" width="16" height="15" viewBox="0 0 16 15"><path d="M1 3L2.6 .8H7L8.6 3H14.6V13.6H1Z" fill="#7ce84c" stroke="#2a8a10" stroke-width=".9"/><path d="M15 3.6V14.2H1.6" stroke="#185808" stroke-width="1.1" fill="none"/><path d="M3.4 7.5H12.4" stroke="#186008" stroke-width="1.2"/></svg>
<div class="tr b" style="left:85.00px;top:248px;transform:scaleX(1.1000);">Static Structural (A5)</div>
<svg style="left:82.5px;top:269.5px" width="9" height="9" viewBox="0 0 9 9"><path d="M.6 4.6L3 7.6L8 .8" stroke="#0c8c1c" stroke-width="1.8" fill="none"/></svg>
<svg style="left:90px;top:261px" width="17" height="16" viewBox="0 0 17 16"><rect x="2" y="3" width="13" height="10.4" fill="#fff" stroke="#a8a8a8" stroke-width=".9"/><path d="M6.3 3V13.4M10.6 3V13.4" stroke="#c8c8c8" stroke-width=".8"/><path d="M2 13.4L6 5.4Q8.5 3 11 5.4L15 13.4" stroke="#187828" stroke-width="1.5" fill="none"/><path d="M3 .6H5.4L4.2 2.6ZM7.2 .6H9.6L8.4 2.6ZM11.4 .6H13.8L12.6 2.6Z" fill="#2828b0"/><path d="M2.8 15.6H5.2L4 13.6ZM7.2 15.6H9.6L8.4 13.6ZM11.6 15.6H14L12.8 13.6Z" fill="#c02020"/></svg>
<div class="tr" style="left:111.90px;top:264px;transform:scaleX(0.9607);">Analysis Settings</div>
<div class="tr b" style="left:84px;top:283px;color:#101878;font-size:12px;">?</div><svg style="left:91px;top:278px" width="16" height="16" viewBox="0 0 16 16"><path d="M1.5 3.5L3 1.2H7L8.5 3.5H14.5V14H1.5Z" fill="#f4e24c" stroke="#8a7a10" stroke-width=".8"/><path d="M15 4V14.6H2.2" stroke="#5a5000" stroke-width="1.2" fill="none"/><path d="M4 7L6.2 5.2H10.6L12.4 7V10.6L10 12.8H6L4 10.8Z" fill="#20a8e0" stroke="#000" stroke-width="1"/><path d="M8.2 8.6L12.2 7V10.6L10 12.6L8.2 12.4Z" fill="#e06020"/><path d="M5.6 6.4L8.2 5.4L10.4 6.6L8.2 8.6Z" fill="#30d040"/><path d="M4.2 7L8.2 8.6L12.2 7M8.2 8.6V12.6" stroke="#000" stroke-width=".9" fill="none"/></svg>
<div class="tr b" style="left:111.90px;top:280px;transform:scaleX(1.0681);">Solution (A6)</div>
<svg style="left:110px;top:299px" width="9" height="12" viewBox="0 0 9 12"><path d="M7.6 .2L2 6.2H4.6L1 11.8L8 5H5.2Z" fill="#f8e020" stroke="#b09800" stroke-width=".6"/></svg>
<svg style="left:118px;top:294px" width="16" height="16" viewBox="0 0 16 16"><path d="M1.5 3.5L3 1.2H7L8.5 3.5H14.5V14H1.5Z" fill="#f4e24c" stroke="#8a7a10" stroke-width=".8"/><path d="M15 4V14.6H2.2" stroke="#5a5000" stroke-width="1.2" fill="none"/><path d="M8 4.4C9.2 5.6 9.2 8 8 9.6C6.8 8 6.8 5.6 8 4.4Z" fill="#1830c0" stroke="#1830c0" stroke-width=".8"/><circle cx="8" cy="11.8" r="1" fill="#c01818"/></svg>
<div class="tr" style="left:138.80px;top:296px;transform:scaleX(0.9816);">Solution Information</div>
<div class="t" style="left:4.50px;top:415px;transform:scaleX(0.9879);color:#555;">Details of "Mesh"</div>
<svg style="left:311px;top:417px" width="9" height="10" viewBox="0 0 9 10"><path d="M2 .6H6.4V5H2Z" fill="#c9d4e6" stroke="#000" stroke-width="1.2"/><path d="M5.8 .6V5" stroke="#000" stroke-width="1.8"/><path d="M.2 5.4H8.4M4.2 5.4V9.6" stroke="#000" stroke-width="1.2" fill="none"/></svg>
<svg style="left:0;top:0" width="324" height="642"><path d="M16 451.5H304" stroke="#9a9590" stroke-width="1"/><path d="M16 469.5H304" stroke="#9a9590" stroke-width="1"/><path d="M16 487.5H304" stroke="#9a9590" stroke-width="1"/><path d="M16 505.5H304" stroke="#9a9590" stroke-width="1"/><path d="M16 523.5H304" stroke="#9a9590" stroke-width="1"/><path d="M16 541.5H304" stroke="#9a9590" stroke-width="1"/><path d="M16 559.5H304" stroke="#9a9590" stroke-width="1"/><path d="M16 577.5H304" stroke="#9a9590" stroke-width="1"/><path d="M16 595.5H304" stroke="#9a9590" stroke-width="1"/><path d="M16 613.5H304" stroke="#9a9590" stroke-width="1"/><path d="M16 631.5H304" stroke="#9a9590" stroke-width="1"/><path d="M15.5 433V640M304.5 433V640" stroke="#9a9590" stroke-width="1"/><path d="M167.5 451V487" stroke="#9a9590" stroke-width="1"/><path d="M167.5 505V640" stroke="#9a9590" stroke-width="1"/></svg>
<svg style="left:4px;top:438px" width="9" height="9" viewBox="0 0 9 9"><rect x=".5" y=".5" width="8" height="8" fill="#fff" stroke="#7a7a7a" stroke-width="1"/><path d="M2 4.5H7" stroke="#000" stroke-width="1"/></svg>
<svg style="left:4px;top:492px" width="9" height="9" viewBox="0 0 9 9"><rect x=".5" y=".5" width="8" height="8" fill="#fff" stroke="#7a7a7a" stroke-width="1"/><path d="M2 4.5H7" stroke="#000" stroke-width="1"/></svg>
<div class="tr b" style="left:19.50px;top:435.5px;transform:scaleX(0.9884);">Defaults</div>
<div class="tr" style="left:19.50px;top:453.5px;transform:scaleX(0.9684);">Physics Preference</div>
<div class="tr" style="left:171.50px;top:453.5px;transform:scaleX(1.0214);">Mechanical</div>
<div class="a" style="left:19px;top:472px;width:11px;height:11px;border:1px solid #c4c4c4;background:#fbfbfb;box-sizing:border-box;"></div><div class="tr" style="left:35.40px;top:471.5px;transform:scaleX(0.9654);">Relevance</div>
<div class="tr" style="left:171.50px;top:471.5px;transform:scaleX(0.9167);">0</div>
<div class="tr b" style="left:19.50px;top:489.5px;transform:scaleX(0.9438);">Sizing</div>
<div class="a" style="left:16px;top:506px;width:151px;height:17px;background:#3390f0;"></div><div class="tr" style="left:19.50px;top:507.5px;transform:scaleX(1.0149);color:#fff;">Use Advanced Size Function</div>
<div class="tr" style="left:19.50px;top:525.5px;transform:scaleX(0.9943);">Relevance Center</div>
<div class="tr" style="left:19.50px;top:543.5px;transform:scaleX(1.0025);">Initial Size Seed</div>
<div class="tr" style="left:19.50px;top:561.5px;transform:scaleX(1.0623);">Smoothing</div>
<div class="tr" style="left:19.50px;top:579.5px;transform:scaleX(1.0437);">Transition</div>
<div class="tr" style="left:19.50px;top:597.5px;transform:scaleX(1.0312);">Span Angle Center</div>
<div class="tr" style="left:171.50px;top:597.5px;transform:scaleX(0.9771);">Coarse</div>
<div class="a" style="left:19px;top:616px;width:11px;height:11px;border:1px solid #c4c4c4;background:#fbfbfb;box-sizing:border-box;"></div><div class="tr" style="left:35.20px;top:615.5px;transform:scaleX(1.0470);">Curvature Normal Angle</div>
<div class="tr" style="left:171.50px;top:615.5px;transform:scaleX(0.9946);">Default (70.3950 °)</div>
<div class="a" style="left:16px;top:632px;width:288px;height:8px;overflow:hidden;"><div class="a" style="left:3px;top:3px;width:11px;height:11px;border:1px solid #c4c4c4;background:#fbfbfb;box-sizing:border-box;"></div><div class="tr" style="left:19.20px;top:1.5px;transform:scaleX(1.0043);">Proximity Accuracy</div>
<div class="tr" style="left:155.50px;top:1.5px;transform:scaleX(0.9000);">0.5</div>
</div>
<div class="a" style="left:168px;top:588px;width:60px;height:7px;overflow:hidden;"><div class="tr" style="left:3.50px;top:-8.5px;transform:scaleX(0.9286);">Fast</div>
</div>
<div class="a" style="left:168px;top:506px;width:136px;height:17px;background:#fff;border:1px solid #8a8682;box-sizing:border-box;"></div><div class="a" style="left:289px;top:507px;width:14px;height:15px;background:#e2e0dc;border-left:1px solid #fbfbfb;border-top:1px solid #fbfbfb;border-right:1px solid #8a8682;border-bottom:1px solid #8a8682;box-sizing:border-box;"></div><div class="tr" style="left:171.50px;top:507.5px;transform:scaleX(1.0149);">On: Proximity and Cu...</div>
<svg style="left:292px;top:512px" width="8" height="5" viewBox="0 0 8 5"><path d="M0 0H7.6L3.8 4.2Z" fill="#000"/></svg>
<div class="a" style="left:168px;top:522.5px;width:136px;height:66px;background:#fff;border:1px solid #3c3c3c;box-sizing:border-box;"></div><div class="a" style="left:169px;top:537px;width:134px;height:12px;background:#3390f0;"></div><div class="tr" style="left:171.60px;top:524px;transform:scaleX(1.0267);">Off</div>
<div class="a" style="left:169px;top:536px;width:134px;height:14px;overflow:hidden;"><div class="tr" style="left:2.60px;top:1px;transform:scaleX(1.0424);color:#fff;">On: Proximity and Curvature</div>
</div>
<div class="tr" style="left:171.60px;top:550px;transform:scaleX(1.0203);">On: Curvature</div>
<div class="tr" style="left:171.60px;top:563px;transform:scaleX(1.0015);">On: Proximity</div>
<div class="tr" style="left:171.60px;top:576px;transform:scaleX(1.0021);">On: Fixed</div>
<div class="a" style="left:305px;top:433px;width:17px;height:207px;background:#f1efec;"></div><div class="a" style="left:307px;top:452px;width:13px;height:72px;border:1px solid #a8a4a0;border-radius:2px;box-sizing:border-box;background:linear-gradient(90deg,#c4c0bc 0,#dedad6 45%,#c8c4c0 100%);"></div><svg style="left:309px;top:484px" width="9" height="8" viewBox="0 0 9 8"><path d="M.5 .5H8M.5 3.5H8M.5 6.5H8" stroke="#6a6662" stroke-width="1"/><path d="M.5 1.5H8M.5 4.5H8M.5 7.5H8" stroke="#fff" stroke-width="1"/></svg>
<svg style="left:310px;top:439px" width="8" height="5" viewBox="0 0 8 5"><path d="M0 4.4L3.6 .6L7.2 4.4Z" fill="#4a4a4a"/></svg>
<svg style="left:310px;top:630px" width="8" height="5" viewBox="0 0 8 5"><path d="M0 .4L3.6 4.2L7.2 .4Z" fill="#4a4a4a"/></svg>
<div class="t" style="left:4.50px;top:650px;transform:scaleX(0.9400);color:#555;">Section Planes</div>
<svg style="left:294px;top:652px" width="9" height="10" viewBox="0 0 9 10"><path d="M2 .6H6.4V5H2Z" fill="#c9d4e6" stroke="#000" stroke-width="1.2"/><path d="M5.8 .6V5" stroke="#000" stroke-width="1.8"/><path d="M.2 5.4H8.4M4.2 5.4V9.6" stroke="#000" stroke-width="1.2" fill="none"/></svg>
<svg style="left:310px;top:653px" width="10" height="9" viewBox="0 0 10 9"><path d="M1 .6L9 8.4M9 .6L1 8.4" stroke="#000" stroke-width="1.5"/></svg>
<div class="a" style="left:5px;top:671px;width:1px;height:16px;background:#fdfdfc;"></div><div class="a" style="left:6px;top:671px;width:1px;height:16px;background:#a09c97;"></div><div class="a" style="left:4px;top:686px;width:3px;height:1px;background:#a09c97;"></div>
<svg style="left:15px;top:671px" width="17" height="16" viewBox="0 0 17 16"><rect x="1.5" y="2.5" width="14" height="10.6" fill="#fff" stroke="#4a3c38" stroke-width="1"/><rect x="8.5" y="2" width="7.5" height="11.6" fill="url(#hatch)"/><path d="M8.5 .2V15.8" stroke="#1a1a40" stroke-width="1.1"/><path d="M0 4.4H7M3.5 1V7.8" stroke="#b81414" stroke-width="1.2"/></svg>
<svg style="left:41px;top:671px" width="14" height="16" viewBox="0 0 14 16"><rect x=".6" y="3" width="6" height="10.4" fill="#f6f4f0" stroke="#aaa6a2" stroke-width="1"/><rect x="6.6" y="4" width="6" height="9.4" fill="#aaa6a2"/><path d="M6.6 .6V15.4M2 2.6L4 .8L4 2.6" stroke="#aaa6a2" stroke-width="1" fill="none"/></svg>
<svg style="left:64px;top:673px" width="14" height="13" viewBox="0 0 14 13"><path d="M1 1L12.5 12M12 .8L1.2 11.6" stroke="#a09c98" stroke-width="1.8"/></svg>
<svg style="left:86px;top:671px" width="17" height="15" viewBox="0 0 17 15"><path d="M8.4 .8L16 8.6L8.4 14L.8 8.6Z" fill="#4a90e8"/><path d="M8.4 .8L.8 8.6L8.4 9.4Z" fill="#a8d0f8"/><path d="M8.4 .8L16 8.6L8.4 9.4Z" fill="#5098ec"/><path d="M.8 8.6L8.4 9.4V14Z" fill="#3070d0"/><path d="M16 8.6L8.4 9.4V14Z" fill="#2058b8"/></svg>
<div class="a" style="left:328px;top:119px;width:1034px;height:2px;background:#4c4c74;"></div><div class="a" style="left:328px;top:121px;width:2px;height:581px;background:#55505e;"></div><div class="a" style="left:330px;top:121px;width:1032px;height:564px;background:linear-gradient(180deg,#6c80e6 0%,#b4baec 50%,#fcfcff 100%);"></div><div class="t b" style="left:1281.50px;top:127.5px;font-size:22px;transform:scaleX(0.8618);color:#fff;line-height:23px;height:23px;">ANSYS</div>
<div class="t" style="left:1318.50px;top:149.5px;font-size:11px;transform:scaleX(0.9966);color:#fff;line-height:12px;height:12px;">R14.5</div>
<svg style="left:0;top:0" width="1362" height="724" viewBox="0 0 1362 724"><defs><linearGradient id="bgg" gradientUnits="userSpaceOnUse" x1="0" y1="121" x2="0" y2="685"><stop offset="0" stop-color="#6c80e6"/><stop offset=".5" stop-color="#b4baec"/><stop offset="1" stop-color="#fcfcff"/></linearGradient><linearGradient id="faceg" gradientUnits="userSpaceOnUse" x1="0" y1="212" x2="0" y2="586"><stop offset="0" stop-color="#baaea3"/><stop offset=".3" stop-color="#a99c91"/><stop offset=".55" stop-color="#a1948a"/><stop offset="1" stop-color="#a5988e"/></linearGradient><clipPath id="hc0"><path d="M907.0 416.6L905.6 421.3L903.9 425.8L901.8 430.2L899.3 434.3L896.5 438.1L893.4 441.7L890.0 444.9L886.3 447.7L882.5 450.2L878.4 452.2L874.2 453.8L870.0 454.9L865.6 455.5L861.3 455.7L857.0 455.4L852.7 454.6L848.6 453.4L844.6 451.7L840.8 449.6L837.2 447.1L833.9 444.2L830.9 440.9L828.2 437.2L825.9 433.3L823.9 429.1L822.3 424.7L821.1 420.2L820.3 415.5L820.0 410.7L820.1 405.8L820.6 401.0L821.5 396.2L822.8 391.5L824.5 387.0L826.6 382.6L829.1 378.5L831.9 374.7L835.1 371.1L838.5 367.9L842.1 365.1L846.0 362.6L850.0 360.6L854.2 359.0L858.5 357.9L862.8 357.3L867.2 357.1L871.5 357.4L875.7 358.2L879.9 359.4L883.8 361.1L887.6 363.2L891.2 365.7L894.5 368.6L897.5 371.9L900.2 375.6L902.6 379.5L904.6 383.7L906.2 388.1L907.3 392.6L908.1 397.3L908.5 402.1L908.4 407.0L907.9 411.8Z"/></clipPath><clipPath id="hc1"><path d="M941.2 387.0L940.8 388.1L940.4 389.3L939.9 390.3L939.3 391.4L938.6 392.3L937.8 393.2L937.0 394.0L936.0 394.7L935.1 395.3L934.1 395.8L933.1 396.2L932.0 396.5L930.9 396.6L929.8 396.7L928.8 396.6L927.7 396.4L926.7 396.1L925.7 395.7L924.8 395.2L923.9 394.5L923.1 393.8L922.3 393.0L921.6 392.1L921.1 391.1L920.6 390.1L920.2 389.0L919.9 387.9L919.7 386.7L919.6 385.5L919.6 384.3L919.7 383.1L920.0 381.9L920.3 380.8L920.7 379.6L921.3 378.6L921.9 377.5L922.6 376.6L923.3 375.7L924.2 374.9L925.1 374.2L926.0 373.6L927.0 373.1L928.1 372.7L929.1 372.4L930.2 372.3L931.3 372.2L932.4 372.3L933.4 372.5L934.4 372.8L935.4 373.2L936.4 373.7L937.3 374.4L938.1 375.1L938.8 375.9L939.5 376.8L940.1 377.8L940.6 378.8L941.0 379.9L941.3 381.0L941.5 382.2L941.5 383.4L941.5 384.6L941.4 385.8Z"/></clipPath><clipPath id="hc2"><path d="M890.9 481.7L890.6 482.9L890.2 484.0L889.7 485.1L889.0 486.1L888.3 487.1L887.6 488.0L886.7 488.8L885.8 489.5L884.9 490.1L883.9 490.6L882.8 491.0L881.8 491.2L880.7 491.4L879.6 491.4L878.5 491.4L877.5 491.2L876.5 490.9L875.5 490.5L874.5 489.9L873.6 489.3L872.8 488.6L872.1 487.8L871.4 486.9L870.8 485.9L870.3 484.9L869.9 483.8L869.6 482.6L869.4 481.5L869.4 480.3L869.4 479.1L869.5 477.9L869.7 476.7L870.1 475.5L870.5 474.4L871.0 473.3L871.6 472.3L872.3 471.4L873.1 470.5L873.9 469.7L874.9 469.0L875.8 468.4L876.8 467.9L877.9 467.5L878.9 467.2L880.0 467.0L881.1 467.0L882.1 467.1L883.2 467.3L884.2 467.6L885.2 468.0L886.1 468.5L887.0 469.1L887.8 469.9L888.6 470.7L889.3 471.6L889.8 472.5L890.3 473.6L890.7 474.7L891.0 475.8L891.2 477.0L891.3 478.2L891.3 479.4L891.2 480.6Z"/></clipPath><clipPath id="hc3"><path d="M808.5 430.9L808.1 432.0L807.7 433.2L807.2 434.2L806.6 435.3L805.9 436.2L805.1 437.1L804.3 437.9L803.4 438.6L802.4 439.2L801.4 439.7L800.4 440.1L799.3 440.4L798.2 440.5L797.1 440.6L796.1 440.5L795.0 440.3L794.0 440.0L793.0 439.6L792.1 439.1L791.2 438.4L790.4 437.7L789.6 436.9L788.9 436.0L788.4 435.0L787.9 434.0L787.5 432.9L787.2 431.8L787.0 430.6L786.9 429.4L786.9 428.2L787.0 427.0L787.3 425.8L787.6 424.7L788.0 423.5L788.6 422.5L789.2 421.4L789.9 420.5L790.6 419.6L791.5 418.8L792.4 418.1L793.4 417.5L794.4 417.0L795.4 416.6L796.5 416.3L797.5 416.2L798.6 416.1L799.7 416.2L800.7 416.4L801.7 416.7L802.7 417.1L803.7 417.6L804.6 418.3L805.4 419.0L806.1 419.8L806.8 420.7L807.4 421.7L807.9 422.7L808.3 423.8L808.6 424.9L808.8 426.1L808.8 427.3L808.8 428.5L808.7 429.7Z"/></clipPath><clipPath id="hc4"><path d="M858.7 336.1L858.4 337.3L858.0 338.4L857.4 339.5L856.8 340.5L856.1 341.4L855.3 342.3L854.5 343.1L853.6 343.8L852.6 344.4L851.6 344.9L850.6 345.3L849.5 345.6L848.5 345.8L847.4 345.8L846.3 345.7L845.3 345.5L844.2 345.2L843.2 344.8L842.3 344.3L841.4 343.7L840.6 342.9L839.8 342.1L839.2 341.2L838.6 340.3L838.1 339.2L837.7 338.1L837.4 337.0L837.2 335.8L837.1 334.6L837.2 333.4L837.3 332.2L837.5 331.1L837.8 329.9L838.3 328.8L838.8 327.7L839.4 326.7L840.1 325.7L840.9 324.8L841.7 324.0L842.6 323.3L843.6 322.7L844.6 322.2L845.6 321.8L846.7 321.6L847.8 321.4L848.8 321.4L849.9 321.4L851.0 321.6L852.0 321.9L853.0 322.3L853.9 322.9L854.8 323.5L855.6 324.2L856.4 325.0L857.0 325.9L857.6 326.9L858.1 327.9L858.5 329.0L858.8 330.2L859.0 331.3L859.1 332.5L859.1 333.7L858.9 334.9Z"/></clipPath></defs><path d="M784.5 580.8L776.1 578.5L767.8 575.7L759.7 572.5L751.8 568.8L744.1 564.6L736.6 559.9L729.3 554.8L722.4 549.3L715.7 543.3L709.3 537.0L703.3 530.2L697.6 523.1L692.2 515.7L687.3 507.9L682.7 499.9L678.5 491.5L674.7 482.9L671.4 474.1L668.4 465.1L665.9 455.8L663.9 446.5L662.3 436.9L661.2 427.3L660.5 417.6L660.3 407.9L660.5 398.1L661.2 388.3L662.3 378.5L664.0 368.8L666.0 359.2L668.5 349.7L671.5 340.3L674.8 331.0L678.6 322.0L682.8 313.1L687.4 304.5L692.4 296.2L697.8 288.1L703.5 280.3L709.5 272.9L715.9 265.8L722.6 259.0L729.6 252.6L736.8 246.7L744.3 241.1L752.1 236.0L760.0 231.3L768.1 227.1L776.4 223.3L784.8 220.0L793.4 217.2L802.0 214.9L810.7 213.1L819.5 211.8L828.3 211.1L837.1 210.8L845.8 211.0L854.5 211.8L863.2 213.1L871.7 214.8L877.6 216.2L869.0 214.5L860.4 213.2L851.7 212.4L842.9 212.2L834.1 212.5L825.4 213.2L816.6 214.5L807.9 216.3L799.2 218.6L790.7 221.4L782.3 224.7L774.0 228.5L765.9 232.7L757.9 237.4L750.2 242.5L742.7 248.1L735.4 254.0L728.5 260.4L721.8 267.2L715.4 274.3L709.3 281.7L703.6 289.5L698.3 297.6L693.3 305.9L688.7 314.5L684.5 323.4L680.7 332.4L677.3 341.7L674.4 351.1L671.9 360.6L669.8 370.2L668.2 379.9L667.1 389.7L666.4 399.5L666.1 409.3L666.3 419.0L667.0 428.7L668.2 438.3L669.8 447.9L671.8 457.2L674.3 466.5L677.2 475.5L680.6 484.3L684.4 492.9L688.5 501.3L693.1 509.3L698.1 517.1L703.4 524.5L709.1 531.6L715.2 538.4L721.6 544.7L728.2 550.7L735.2 556.2L742.4 561.3L749.9 565.9L757.7 570.2L765.6 573.9L773.7 577.1L782.0 579.9L790.4 582.2Z" fill="#6e5f52" stroke="#000" stroke-width="1"/><path d="M996.1 437.8L994.3 445.0L992.2 452.1L989.9 459.1L987.3 466.0L984.5 472.8L981.5 479.5L978.2 486.0L974.7 492.5L971.0 498.8L967.1 504.9L963.0 510.9L958.7 516.7L954.1 522.3L949.5 527.7L944.6 533.0L939.5 538.0L934.3 542.8L929.0 547.4L923.5 551.8L917.8 555.9L912.0 559.8L906.1 563.4L900.1 566.8L894.0 569.9L887.8 572.8L881.5 575.4L875.2 577.7L868.8 579.8L862.3 581.5L855.8 583.0L849.2 584.2L842.6 585.2L836.1 585.8L829.5 586.1L822.9 586.2L816.3 586.0L809.8 585.5L803.3 584.6L796.8 583.6L790.4 582.2L784.1 580.5L777.8 578.6L771.7 576.4L765.6 573.9L759.6 571.1L753.8 568.1L748.0 564.8L742.4 561.3L737.0 557.5L731.7 553.5L726.5 549.2L721.6 544.7L716.8 540.0L712.1 535.0L707.7 529.9L703.4 524.5L699.4 519.0L695.6 513.3L691.9 507.3L688.5 501.3L685.4 495.0L682.4 488.7L679.7 482.2L677.2 475.5L675.0 468.7L673.0 461.9L671.3 454.9L669.8 447.9L668.5 440.7L667.5 433.5L666.8 426.3L666.3 419.0L666.1 411.7L666.2 404.4L666.5 397.0L667.1 389.7L667.9 382.4L669.0 375.1L670.3 367.8L671.9 360.6L673.7 353.4L675.8 346.3L678.1 339.3L680.7 332.4L683.5 325.6L686.5 318.9L689.8 312.4L693.3 305.9L697.0 299.6L700.9 293.5L705.0 287.5L709.3 281.7L713.9 276.1L718.5 270.7L723.4 265.4L728.5 260.4L733.7 255.6L739.0 251.0L744.5 246.6L750.2 242.5L756.0 238.6L761.9 235.0L767.9 231.6L774.0 228.5L780.2 225.6L786.5 223.0L792.8 220.7L799.2 218.6L805.7 216.9L812.2 215.4L818.8 214.2L825.4 213.2L831.9 212.6L838.5 212.3L845.1 212.2L851.7 212.4L858.2 212.9L864.7 213.8L871.2 214.8L877.6 216.2L883.9 217.9L890.2 219.8L896.3 222.0L902.4 224.5L908.4 227.3L914.2 230.3L920.0 233.6L925.6 237.1L931.0 240.9L936.3 244.9L941.5 249.2L946.4 253.7L951.2 258.4L955.9 263.4L960.3 268.5L964.6 273.9L968.6 279.4L972.4 285.1L976.1 291.1L979.5 297.1L982.6 303.4L985.6 309.7L988.3 316.2L990.8 322.9L993.0 329.7L995.0 336.5L996.7 343.5L998.2 350.5L999.5 357.7L1000.5 364.9L1001.2 372.1L1001.7 379.4L1001.9 386.7L1001.8 394.0L1001.5 401.4L1000.9 408.7L1000.1 416.0L999.0 423.3L997.7 430.6Z" fill="url(#faceg)" stroke="#000" stroke-width="1.2"/><path d="M951.2 427.1L949.4 434.0L947.3 440.8L944.8 447.5L942.1 454.0L939.1 460.4L935.7 466.6L932.1 472.7L928.3 478.5L924.1 484.1L919.8 489.5L915.1 494.7L910.3 499.6L905.3 504.2L900.0 508.5L894.6 512.5L889.0 516.2L883.3 519.6L877.4 522.6L871.4 525.4L865.3 527.7L859.1 529.8L852.9 531.4L846.6 532.7L840.2 533.7L833.9 534.2L827.5 534.4L821.2 534.2L814.9 533.7L808.7 532.8L802.5 531.5L796.4 529.9L790.4 527.9L784.5 525.5L778.8 522.8L773.2 519.8L767.8 516.4L762.6 512.7L757.5 508.7L752.7 504.4L748.1 499.8L743.7 494.9L739.6 489.8L735.7 484.4L732.1 478.8L728.8 473.0L725.8 467.0L723.1 460.8L720.6 454.4L718.5 447.8L716.7 441.2L715.3 434.4L714.1 427.5L713.3 420.5L712.8 413.5L712.6 406.5L712.8 399.4L713.3 392.3L714.1 385.3L715.3 378.2L716.8 371.3L718.6 364.4L720.7 357.6L723.2 350.9L725.9 344.4L728.9 338.0L732.3 331.8L735.9 325.7L739.7 319.9L743.9 314.3L748.2 308.9L752.9 303.7L757.7 298.8L762.7 294.2L768.0 289.9L773.4 285.9L779.0 282.2L784.7 278.8L790.6 275.8L796.6 273.0L802.7 270.7L808.9 268.6L815.1 267.0L821.4 265.7L827.8 264.7L834.1 264.2L840.5 264.0L846.8 264.2L853.1 264.7L859.3 265.6L865.5 266.9L871.6 268.5L877.6 270.5L883.5 272.9L889.2 275.6L894.8 278.6L900.2 282.0L905.4 285.7L910.5 289.7L915.3 294.0L919.9 298.6L924.3 303.5L928.4 308.6L932.3 314.0L935.9 319.6L939.2 325.4L942.2 331.4L944.9 337.6L947.4 344.0L949.5 350.6L951.3 357.2L952.7 364.0L953.9 370.9L954.7 377.9L955.2 384.9L955.4 391.9L955.2 399.0L954.7 406.1L953.9 413.1L952.7 420.2Z" fill="#46362e" stroke="#000" stroke-width="1"/><path d="M950.2 426.9L948.4 433.7L946.3 440.3L943.9 446.9L941.2 453.4L938.2 459.7L934.9 465.8L931.4 471.8L927.6 477.5L923.5 483.1L919.2 488.4L914.6 493.4L909.9 498.2L904.9 502.8L899.7 507.0L894.4 511.0L888.9 514.6L883.2 518.0L877.4 521.0L871.5 523.7L865.5 526.0L859.4 528.0L853.3 529.6L847.1 530.9L840.8 531.8L834.6 532.4L828.3 532.6L822.1 532.4L815.9 531.9L809.7 531.0L803.6 529.7L797.6 528.1L791.7 526.1L785.9 523.8L780.3 521.1L774.8 518.2L769.5 514.8L764.3 511.2L759.3 507.3L754.6 503.0L750.0 498.5L745.7 493.7L741.7 488.6L737.9 483.3L734.3 477.8L731.1 472.1L728.1 466.1L725.4 460.0L723.0 453.7L720.9 447.3L719.1 440.7L717.7 434.0L716.5 427.2L715.7 420.4L715.2 413.5L715.1 406.5L715.3 399.6L715.7 392.6L716.6 385.6L717.7 378.7L719.2 371.8L721.0 365.1L723.1 358.4L725.5 351.8L728.2 345.3L731.2 339.0L734.4 332.9L738.0 327.0L741.8 321.2L745.9 315.7L750.2 310.4L754.7 305.3L759.5 300.5L764.5 295.9L769.6 291.7L775.0 287.7L780.5 284.1L786.1 280.7L791.9 277.7L797.8 275.1L803.8 272.7L809.9 270.7L816.1 269.1L822.3 267.8L828.5 266.9L834.8 266.3L841.0 266.1L847.3 266.3L853.5 266.8L859.6 267.7L865.7 269.0L871.7 270.6L877.6 272.6L883.4 274.9L889.1 277.6L894.6 280.6L899.9 283.9L905.1 287.5L910.0 291.5L914.8 295.7L919.3 300.2L923.6 305.0L927.7 310.1L931.5 315.4L935.0 320.9L938.3 326.6L941.3 332.6L944.0 338.7L946.4 345.0L948.4 351.4L950.2 358.0L951.7 364.7L952.8 371.5L953.6 378.3L954.1 385.2L954.3 392.2L954.1 399.2L953.6 406.1L952.8 413.1L951.6 420.0Z" fill="#7c6e64" stroke="#000" stroke-width=".8"/><path d="M826.1 532.6L810.0 531.0L821.7 531.5L837.6 533.1Z" fill="#45352d" stroke="#45352d" stroke-width=".6"/><path d="M810.0 531.0L794.3 527.0L806.2 527.6L821.7 531.5Z" fill="#45352d" stroke="#45352d" stroke-width=".6"/><path d="M794.3 527.0L779.3 520.6L791.5 521.3L806.2 527.6Z" fill="#45352e" stroke="#45352e" stroke-width=".6"/><path d="M779.3 520.6L765.4 512.0L777.8 512.8L791.5 521.3Z" fill="#46362e" stroke="#46362e" stroke-width=".6"/><path d="M765.4 512.0L752.8 501.3L765.4 502.3L777.8 512.8Z" fill="#46362e" stroke="#46362e" stroke-width=".6"/><path d="M752.8 501.3L741.7 488.6L754.5 489.9L765.4 502.3Z" fill="#46362e" stroke="#46362e" stroke-width=".6"/><path d="M741.7 488.6L732.3 474.4L745.3 475.8L754.5 489.9Z" fill="#46362e" stroke="#46362e" stroke-width=".6"/><path d="M732.3 474.4L724.8 458.7L737.9 460.4L745.3 475.8Z" fill="#46362e" stroke="#46362e" stroke-width=".6"/><path d="M724.8 458.7L719.4 441.9L732.6 443.8L737.9 460.4Z" fill="#46362e" stroke="#46362e" stroke-width=".6"/><path d="M719.4 441.9L716.1 424.3L729.4 426.5L732.6 443.8Z" fill="#46362e" stroke="#46362e" stroke-width=".6"/><path d="M716.1 424.3L715.1 406.2L728.3 408.8L729.4 426.5Z" fill="#46362e" stroke="#46362e" stroke-width=".6"/><path d="M715.1 406.2L716.2 388.0L729.5 390.9L728.3 408.8Z" fill="#46362e" stroke="#46362e" stroke-width=".6"/><path d="M716.2 388.0L719.6 370.1L732.8 373.2L729.5 390.9Z" fill="#46362e" stroke="#46362e" stroke-width=".6"/><path d="M719.6 370.1L725.1 352.6L738.2 356.1L732.8 373.2Z" fill="#483830" stroke="#483830" stroke-width=".6"/><path d="M725.1 352.6L732.7 336.1L745.6 339.8L738.2 356.1Z" fill="#4a3a32" stroke="#4a3a32" stroke-width=".6"/><path d="M732.7 336.1L742.1 320.7L754.9 324.7L745.6 339.8Z" fill="#4d3d35" stroke="#4d3d35" stroke-width=".6"/><path d="M742.1 320.7L753.3 306.8L765.9 311.0L754.9 324.7Z" fill="#4f4037" stroke="#4f4037" stroke-width=".6"/><path d="M753.3 306.8L766.0 294.6L778.4 299.0L765.9 311.0Z" fill="#53433a" stroke="#53433a" stroke-width=".6"/><path d="M766.0 294.6L780.0 284.4L792.2 289.0L778.4 299.0Z" fill="#5a4b41" stroke="#5a4b41" stroke-width=".6"/><path d="M780.0 284.4L795.0 276.3L806.9 281.0L792.2 289.0Z" fill="#615248" stroke="#615248" stroke-width=".6"/><path d="M795.0 276.3L810.7 270.5L822.4 275.3L806.9 281.0Z" fill="#685a4f" stroke="#685a4f" stroke-width=".6"/><path d="M810.7 270.5L826.9 267.1L838.3 271.9L822.4 275.3Z" fill="#6b5c52" stroke="#6b5c52" stroke-width=".6"/><path d="M826.9 267.1L843.2 266.2L854.4 271.0L838.3 271.9Z" fill="#6c5e53" stroke="#6c5e53" stroke-width=".6"/><path d="M843.2 266.2L859.4 267.7L870.2 272.5L854.4 271.0Z" fill="#6e6055" stroke="#6e6055" stroke-width=".6"/><path d="M859.4 267.7L875.1 271.7L885.7 276.5L870.2 272.5Z" fill="#706257" stroke="#706257" stroke-width=".6"/><path d="M875.1 271.7L890.0 278.1L900.4 282.8L885.7 276.5Z" fill="#6c5e53" stroke="#6c5e53" stroke-width=".6"/><path d="M837.6 533.1L821.7 531.5L833.4 532.2L849.1 533.7Z" fill="#45352d" stroke="#45352d" stroke-width=".6"/><path d="M821.7 531.5L806.2 527.6L818.2 528.3L833.4 532.2Z" fill="#45352d" stroke="#45352d" stroke-width=".6"/><path d="M806.2 527.6L791.5 521.3L803.7 522.1L818.2 528.3Z" fill="#45352e" stroke="#45352e" stroke-width=".6"/><path d="M791.5 521.3L777.8 512.8L790.3 513.8L803.7 522.1Z" fill="#46362e" stroke="#46362e" stroke-width=".6"/><path d="M777.8 512.8L765.4 502.3L778.0 503.4L790.3 513.8Z" fill="#46362e" stroke="#46362e" stroke-width=".6"/><path d="M765.4 502.3L754.5 489.9L767.3 491.2L778.0 503.4Z" fill="#46362e" stroke="#46362e" stroke-width=".6"/><path d="M754.5 489.9L745.3 475.8L758.2 477.3L767.3 491.2Z" fill="#46362e" stroke="#46362e" stroke-width=".6"/><path d="M745.3 475.8L737.9 460.4L751.0 462.1L758.2 477.3Z" fill="#46362e" stroke="#46362e" stroke-width=".6"/><path d="M737.9 460.4L732.6 443.8L745.8 445.9L751.0 462.1Z" fill="#46362e" stroke="#46362e" stroke-width=".6"/><path d="M732.6 443.8L729.4 426.5L742.6 428.9L745.8 445.9Z" fill="#46362e" stroke="#46362e" stroke-width=".6"/><path d="M729.4 426.5L728.3 408.8L741.6 411.4L742.6 428.9Z" fill="#46362e" stroke="#46362e" stroke-width=".6"/><path d="M728.3 408.8L729.5 390.9L742.7 393.8L741.6 411.4Z" fill="#46362e" stroke="#46362e" stroke-width=".6"/><path d="M729.5 390.9L732.8 373.2L746.0 376.4L742.7 393.8Z" fill="#46362e" stroke="#46362e" stroke-width=".6"/><path d="M732.8 373.2L738.2 356.1L751.3 359.5L746.0 376.4Z" fill="#483830" stroke="#483830" stroke-width=".6"/><path d="M738.2 356.1L745.6 339.8L758.6 343.5L751.3 359.5Z" fill="#4a3a32" stroke="#4a3a32" stroke-width=".6"/><path d="M745.6 339.8L754.9 324.7L767.8 328.6L758.6 343.5Z" fill="#4d3d35" stroke="#4d3d35" stroke-width=".6"/><path d="M754.9 324.7L765.9 311.0L778.6 315.2L767.8 328.6Z" fill="#4f4037" stroke="#4f4037" stroke-width=".6"/><path d="M765.9 311.0L778.4 299.0L790.9 303.4L778.6 315.2Z" fill="#53433a" stroke="#53433a" stroke-width=".6"/><path d="M778.4 299.0L792.2 289.0L804.4 293.5L790.9 303.4Z" fill="#5a4b41" stroke="#5a4b41" stroke-width=".6"/><path d="M792.2 289.0L806.9 281.0L818.9 285.6L804.4 293.5Z" fill="#615248" stroke="#615248" stroke-width=".6"/><path d="M806.9 281.0L822.4 275.3L834.1 280.0L818.9 285.6Z" fill="#685a4f" stroke="#685a4f" stroke-width=".6"/><path d="M822.4 275.3L838.3 271.9L849.8 276.7L834.1 280.0Z" fill="#6b5c52" stroke="#6b5c52" stroke-width=".6"/><path d="M838.3 271.9L854.4 271.0L865.6 275.8L849.8 276.7Z" fill="#6c5e53" stroke="#6c5e53" stroke-width=".6"/><path d="M854.4 271.0L870.2 272.5L881.2 277.3L865.6 275.8Z" fill="#6e6055" stroke="#6e6055" stroke-width=".6"/><path d="M870.2 272.5L885.7 276.5L896.4 281.2L881.2 277.3Z" fill="#706257" stroke="#706257" stroke-width=".6"/><path d="M885.7 276.5L900.4 282.8L910.9 287.4L896.4 281.2Z" fill="#6c5e53" stroke="#6c5e53" stroke-width=".6"/><path d="M969.1 431.4L965.6 443.6L959.7 440.7L962.7 429.9Z" fill="#978b80" stroke="#978b80" stroke-width=".6"/><path d="M965.6 443.6L961.1 455.5L955.7 451.1L959.7 440.7Z" fill="#94887d" stroke="#94887d" stroke-width=".6"/><path d="M961.1 455.5L955.6 466.9L950.8 461.1L955.7 451.1Z" fill="#918479" stroke="#918479" stroke-width=".6"/><path d="M955.6 466.9L949.1 477.6L945.1 470.6L950.8 461.1Z" fill="#8e8176" stroke="#8e8176" stroke-width=".6"/><path d="M949.1 477.6L941.7 487.7L938.6 479.5L945.1 470.6Z" fill="#8b7e73" stroke="#8b7e73" stroke-width=".6"/><path d="M941.7 487.7L933.6 497.0L931.4 487.7L938.6 479.5Z" fill="#877a6f" stroke="#877a6f" stroke-width=".6"/><path d="M933.6 497.0L924.7 505.4L923.6 495.1L931.4 487.7Z" fill="#83766b" stroke="#83766b" stroke-width=".6"/><path d="M924.7 505.4L915.1 512.8L915.1 501.6L923.6 495.1Z" fill="#7e7166" stroke="#7e7166" stroke-width=".6"/><path d="M915.1 512.8L905.0 519.2L906.2 507.2L915.1 501.6Z" fill="#7b6d62" stroke="#7b6d62" stroke-width=".6"/><path d="M905.0 519.2L894.4 524.5L896.9 511.9L906.2 507.2Z" fill="#786a5f" stroke="#786a5f" stroke-width=".6"/><path d="M894.4 524.5L883.5 528.6L887.3 515.5L896.9 511.9Z" fill="#75675c" stroke="#75675c" stroke-width=".6"/><path d="M883.5 528.6L872.3 531.5L877.4 518.1L887.3 515.5Z" fill="#73655a" stroke="#73655a" stroke-width=".6"/><path d="M872.3 531.5L861.0 533.2L867.5 519.6L877.4 518.1Z" fill="#706257" stroke="#706257" stroke-width=".6"/><path d="M861.0 533.2L849.6 533.7L857.5 520.0L867.5 519.6Z" fill="#6e6055" stroke="#6e6055" stroke-width=".6"/><path d="M849.6 533.7L838.4 532.9L847.5 519.4L857.5 520.0Z" fill="#6d5e54" stroke="#6d5e54" stroke-width=".6"/><path d="M838.4 532.9L827.3 530.9L837.7 517.6L847.5 519.4Z" fill="#6b5d52" stroke="#6b5d52" stroke-width=".6"/><path d="M827.3 530.9L816.5 527.7L828.2 514.8L837.7 517.6Z" fill="#6a5b51" stroke="#6a5b51" stroke-width=".6"/><path d="M816.5 527.7L806.0 523.3L819.0 510.9L828.2 514.8Z" fill="#695b50" stroke="#695b50" stroke-width=".6"/><path d="M806.0 523.3L796.1 517.8L810.3 506.0L819.0 510.9Z" fill="#685a4f" stroke="#685a4f" stroke-width=".6"/><path d="M796.1 517.8L786.8 511.1L802.0 500.1L810.3 506.0Z" fill="#67594e" stroke="#67594e" stroke-width=".6"/><path d="M786.8 511.1L778.1 503.5L794.4 493.4L802.0 500.1Z" fill="#66584d" stroke="#66584d" stroke-width=".6"/><path d="M778.1 503.5L770.2 494.9L787.5 485.8L794.4 493.4Z" fill="#65574c" stroke="#65574c" stroke-width=".6"/><path d="M770.2 494.9L763.2 485.4L781.2 477.5L787.5 485.8Z" fill="#64564c" stroke="#64564c" stroke-width=".6"/><path d="M763.2 485.4L757.0 475.1L775.8 468.4L781.2 477.5Z" fill="#63554b" stroke="#63554b" stroke-width=".6"/><path d="M757.0 475.1L751.8 464.2L771.3 458.8L775.8 468.4Z" fill="#64554b" stroke="#64554b" stroke-width=".6"/><path d="M751.8 464.2L747.7 452.7L767.6 448.7L771.3 458.8Z" fill="#65574d" stroke="#65574d" stroke-width=".6"/><path d="M747.7 452.7L744.6 440.7L764.9 438.1L767.6 448.7Z" fill="#67594e" stroke="#67594e" stroke-width=".6"/><path d="M744.6 440.7L742.5 428.4L763.1 427.3L764.9 438.1Z" fill="#695a50" stroke="#695a50" stroke-width=".6"/><path d="M742.5 428.4L741.6 415.9L762.3 416.2L763.1 427.3Z" fill="#6a5c51" stroke="#6a5c51" stroke-width=".6"/><path d="M741.6 415.9L741.8 403.3L762.4 405.1L762.3 416.2Z" fill="#6c5e53" stroke="#6c5e53" stroke-width=".6"/><path d="M741.8 403.3L743.1 390.6L763.6 393.9L762.4 405.1Z" fill="#6e5f55" stroke="#6e5f55" stroke-width=".6"/><path d="M743.1 390.6L745.5 378.1L765.7 382.9L763.6 393.9Z" fill="#6f6156" stroke="#6f6156" stroke-width=".6"/><path d="M745.5 378.1L749.0 365.9L768.8 372.1L765.7 382.9Z" fill="#716358" stroke="#716358" stroke-width=".6"/><path d="M749.0 365.9L753.5 354.0L772.8 361.7L768.8 372.1Z" fill="#726459" stroke="#726459" stroke-width=".6"/><path d="M753.5 354.0L759.1 342.6L777.6 351.7L772.8 361.7Z" fill="#74665b" stroke="#74665b" stroke-width=".6"/><path d="M759.1 342.6L765.5 331.9L783.3 342.2L777.6 351.7Z" fill="#75675c" stroke="#75675c" stroke-width=".6"/><path d="M765.5 331.9L772.9 321.8L789.8 333.3L783.3 342.2Z" fill="#77695e" stroke="#77695e" stroke-width=".6"/><path d="M772.9 321.8L781.1 312.5L797.0 325.1L789.8 333.3Z" fill="#786b60" stroke="#786b60" stroke-width=".6"/><path d="M781.1 312.5L790.0 304.1L804.9 317.7L797.0 325.1Z" fill="#7a6c61" stroke="#7a6c61" stroke-width=".6"/><path d="M790.0 304.1L799.5 296.7L813.3 311.2L804.9 317.7Z" fill="#7b6e63" stroke="#7b6e63" stroke-width=".6"/><path d="M799.5 296.7L809.6 290.3L822.2 305.6L813.3 311.2Z" fill="#7f7267" stroke="#7f7267" stroke-width=".6"/><path d="M809.6 290.3L820.2 285.1L831.5 300.9L822.2 305.6Z" fill="#86796e" stroke="#86796e" stroke-width=".6"/><path d="M820.2 285.1L831.1 280.9L841.1 297.3L831.5 300.9Z" fill="#8c7f74" stroke="#8c7f74" stroke-width=".6"/><path d="M831.1 280.9L842.3 278.0L851.0 294.7L841.1 297.3Z" fill="#93867b" stroke="#93867b" stroke-width=".6"/><path d="M842.3 278.0L853.6 276.3L861.0 293.2L851.0 294.7Z" fill="#9a8d82" stroke="#9a8d82" stroke-width=".6"/><path d="M853.6 276.3L865.0 275.8L871.0 292.8L861.0 293.2Z" fill="#a89c91" stroke="#a89c91" stroke-width=".6"/><path d="M865.0 275.8L876.3 276.6L880.9 293.4L871.0 292.8Z" fill="#b1a59c" stroke="#b1a59c" stroke-width=".6"/><path d="M876.3 276.6L887.4 278.6L890.7 295.2L880.9 293.4Z" fill="#baafa6" stroke="#baafa6" stroke-width=".6"/><path d="M887.4 278.6L898.2 281.8L900.2 298.0L890.7 295.2Z" fill="#c0b5ad" stroke="#c0b5ad" stroke-width=".6"/><path d="M898.2 281.8L908.6 286.2L909.4 301.9L900.2 298.0Z" fill="#c1b7af" stroke="#c1b7af" stroke-width=".6"/><path d="M908.6 286.2L918.5 291.7L918.2 306.8L909.4 301.9Z" fill="#c3b9b1" stroke="#c3b9b1" stroke-width=".6"/><path d="M918.5 291.7L927.9 298.4L926.4 312.7L918.2 306.8Z" fill="#c5bbb3" stroke="#c5bbb3" stroke-width=".6"/><path d="M927.9 298.4L936.5 306.0L934.0 319.4L926.4 312.7Z" fill="#c7bcb5" stroke="#c7bcb5" stroke-width=".6"/><path d="M936.5 306.0L944.4 314.6L941.0 327.0L934.0 319.4Z" fill="#c9beb7" stroke="#c9beb7" stroke-width=".6"/><path d="M944.4 314.6L951.5 324.1L947.2 335.3L941.0 327.0Z" fill="#cac0b9" stroke="#cac0b9" stroke-width=".6"/><path d="M951.5 324.1L957.6 334.4L952.6 344.4L947.2 335.3Z" fill="#ccc2bb" stroke="#ccc2bb" stroke-width=".6"/><path d="M957.6 334.4L962.8 345.3L957.2 354.0L952.6 344.4Z" fill="#cbc1ba" stroke="#cbc1ba" stroke-width=".6"/><path d="M962.8 345.3L967.0 356.8L960.8 364.1L957.2 354.0Z" fill="#c7bdb5" stroke="#c7bdb5" stroke-width=".6"/><path d="M967.0 356.8L970.1 368.8L963.6 374.7L960.8 364.1Z" fill="#c3b8b0" stroke="#c3b8b0" stroke-width=".6"/><path d="M970.1 368.8L972.1 381.1L965.4 385.5L963.6 374.7Z" fill="#bfb4ac" stroke="#bfb4ac" stroke-width=".6"/><path d="M972.1 381.1L973.0 393.6L966.2 396.6L965.4 385.5Z" fill="#bbb0a7" stroke="#bbb0a7" stroke-width=".6"/><path d="M973.0 393.6L972.8 406.3L966.0 407.7L966.2 396.6Z" fill="#b6aba2" stroke="#b6aba2" stroke-width=".6"/><path d="M972.8 406.3L971.5 418.9L964.9 418.9L966.0 407.7Z" fill="#aca196" stroke="#aca196" stroke-width=".6"/><path d="M971.5 418.9L969.1 431.4L962.7 429.9L964.9 418.9Z" fill="#a1958a" stroke="#a1958a" stroke-width=".6"/><path d="M962.7 429.9L961.6 434.2L960.4 438.5L958.9 442.8L957.4 447.0L955.7 451.1L953.8 455.2L951.8 459.2L949.7 463.1L947.5 466.9L945.1 470.6L942.6 474.3L940.0 477.8L937.2 481.2L934.4 484.5L931.4 487.7L928.3 490.7L925.2 493.7L921.9 496.5L918.6 499.1L915.1 501.6L911.6 504.0L908.1 506.2L904.4 508.2L900.7 510.1L896.9 511.9L893.1 513.5L889.2 514.9L885.3 516.1L881.4 517.2L877.4 518.1L873.5 518.8L869.5 519.4L865.5 519.8L861.5 520.0L857.5 520.0L853.5 519.9L849.5 519.6L845.5 519.1L841.6 518.4L837.7 517.6L833.9 516.6L830.1 515.4L826.3 514.1L822.6 512.5L819.0 510.9L815.5 509.0L812.0 507.0L808.6 504.9L805.3 502.6L802.0 500.1L798.9 497.5L795.9 494.8L793.0 491.9L790.2 488.9L787.5 485.8L784.9 482.6L782.4 479.2L780.1 475.7L777.9 472.1L775.8 468.4L773.9 464.6L772.1 460.8L770.5 456.8L769.0 452.8L767.6 448.7L766.4 444.5L765.3 440.3L764.4 436.0L763.7 431.6L763.1 427.3L762.6 422.9L762.3 418.4L762.2 414.0L762.2 409.5L762.4 405.1L762.8 400.6L763.3 396.2L763.9 391.7L764.7 387.3L765.7 382.9L766.8 378.6L768.1 374.3L769.5 370.0L771.1 365.8L772.8 361.7L774.6 357.6L776.6 353.6L778.7 349.7L781.0 345.9L783.3 342.2L785.8 338.5L788.5 335.0L791.2 331.6L794.1 328.3L797.0 325.1L800.1 322.1L803.3 319.1L806.5 316.3L809.9 313.7L813.3 311.2L816.8 308.8L820.4 306.6L824.0 304.6L827.7 302.7L831.5 300.9L835.3 299.3L839.2 297.9L843.1 296.7L847.0 295.6L851.0 294.7L855.0 294.0L859.0 293.4L863.0 293.0L867.0 292.8L871.0 292.8L875.0 292.9L878.9 293.2L882.9 293.7L886.8 294.4L890.7 295.2L894.6 296.2L898.4 297.4L902.1 298.7L905.8 300.3L909.4 301.9L913.0 303.8L916.5 305.8L919.9 307.9L923.2 310.2L926.4 312.7L929.5 315.3L932.5 318.0L935.5 320.9L938.3 323.9L941.0 327.0L943.6 330.2L946.0 333.6L948.3 337.1L950.5 340.7L952.6 344.4L954.5 348.2L956.3 352.0L958.0 356.0L959.5 360.0L960.8 364.1L962.1 368.3L963.1 372.5L964.0 376.8L964.8 381.2L965.4 385.5L965.8 389.9L966.1 394.4L966.2 398.8L966.2 403.3L966.0 407.7L965.7 412.2L965.2 416.6L964.5 421.1L963.7 425.5Z" fill="url(#faceg)" stroke="#000" stroke-width="1"/><path d="M773.0 576.9L767.1 575.5M773.0 576.9L746.4 565.9M752.3 567.3L746.4 565.9M752.3 567.3L727.2 553.1M733.1 554.5L727.2 553.1M733.1 554.5L709.9 537.5M715.7 538.9L709.9 537.5M715.7 538.9L694.7 519.3M700.6 520.7L694.7 519.3M700.6 520.7L682.1 498.8M688.0 500.2L682.1 498.8M688.0 500.2L672.2 476.4M678.1 477.8L672.2 476.4M678.1 477.8L665.2 452.6M671.0 454.0L665.2 452.6M671.0 454.0L661.2 427.7M667.1 429.1L661.2 427.7M667.1 429.1L660.3 402.3M666.2 403.7L660.3 402.3M666.2 403.7L662.6 376.8M668.5 378.2L662.6 376.8M668.5 378.2L667.9 351.7M673.8 353.1L667.9 351.7M673.8 353.1L676.3 327.5M682.1 328.9L676.3 327.5M682.1 328.9L687.4 304.5M693.3 305.9L687.4 304.5M693.3 305.9L701.2 283.3M707.1 284.7L701.2 283.3M707.1 284.7L717.3 264.3M723.2 265.7L717.3 264.3M723.2 265.7L735.5 247.7M741.4 249.1L735.5 247.7M741.4 249.1L755.5 233.9M761.3 235.3L755.5 233.9M761.3 235.3L776.8 223.2M782.6 224.6L776.8 223.2M782.6 224.6L799.0 215.7M804.9 217.1L799.0 215.7M804.9 217.1L821.8 211.6M827.7 213.0L821.8 211.6M827.7 213.0L844.7 211.0M850.6 212.4L844.7 211.0M850.6 212.4L867.3 213.8M873.1 215.2L867.3 213.8M873.1 215.2L889.1 220.1M994.2 445.3L947.1 441.4M994.2 445.3L952.0 423.5M985.9 469.5L940.0 458.5M985.9 469.5L947.1 441.4M974.7 492.5L931.0 474.5M974.7 492.5L940.0 458.5M960.9 513.7L920.1 489.1M960.9 513.7L931.0 474.5M944.8 532.7L907.7 502.0M944.8 532.7L920.1 489.1M926.6 549.3L893.9 513.0M926.6 549.3L907.7 502.0M906.7 563.1L878.9 521.9M906.7 563.1L893.9 513.0M885.4 573.8L863.2 528.5M885.4 573.8L878.9 521.9M863.1 581.3L846.9 532.7M863.1 581.3L863.2 528.5M840.3 585.4L830.3 534.4M840.3 585.4L846.9 532.7M817.4 586.0L813.8 533.6M817.4 586.0L830.3 534.4M794.9 583.2L797.7 530.2M794.9 583.2L813.8 533.6M773.0 576.9L782.3 524.5M773.0 576.9L797.7 530.2M752.3 567.3L767.8 516.4M752.3 567.3L782.3 524.5M733.1 554.5L754.6 506.1M733.1 554.5L767.8 516.4M715.7 538.9L742.8 493.9M715.7 538.9L754.6 506.1M700.6 520.7L732.8 479.8M700.6 520.7L742.8 493.9M688.0 500.2L724.6 464.3M688.0 500.2L732.8 479.8M678.1 477.8L718.4 447.5M678.1 477.8L724.6 464.3M671.0 454.0L714.5 429.9M671.0 454.0L718.4 447.5M667.1 429.1L712.7 411.7M667.1 429.1L714.5 429.9M666.2 403.7L713.2 393.2M666.2 403.7L712.7 411.7M668.5 378.2L716.0 374.9M668.5 378.2L713.2 393.2M673.8 353.1L720.9 357.0M673.8 353.1L716.0 374.9M682.1 328.9L728.0 339.9M682.1 328.9L720.9 357.0M693.3 305.9L737.0 323.9M693.3 305.9L728.0 339.9M707.1 284.7L747.9 309.3M707.1 284.7L737.0 323.9M723.2 265.7L760.3 296.4M723.2 265.7L747.9 309.3M741.4 249.1L774.1 285.4M741.4 249.1L760.3 296.4M761.3 235.3L789.1 276.5M761.3 235.3L774.1 285.4M782.6 224.6L804.8 269.9M782.6 224.6L789.1 276.5M804.9 217.1L821.1 265.7M804.9 217.1L804.8 269.9M827.7 213.0L837.7 264.0M827.7 213.0L821.1 265.7M850.6 212.4L854.2 264.8M850.6 212.4L837.7 264.0M873.1 215.2L870.3 268.2M873.1 215.2L854.2 264.8M895.0 221.5L885.7 273.9M895.0 221.5L870.3 268.2M915.7 231.1L900.2 282.0M915.7 231.1L885.7 273.9M934.9 243.9L913.4 292.3M934.9 243.9L900.2 282.0M952.3 259.5L925.2 304.5M952.3 259.5L913.4 292.3M967.4 277.7L935.2 318.6M967.4 277.7L925.2 304.5M980.0 298.2L943.4 334.1M980.0 298.2L935.2 318.6M989.9 320.6L949.6 350.9M989.9 320.6L943.4 334.1M997.0 344.4L953.5 368.5M997.0 344.4L949.6 350.9M1000.9 369.3L955.3 386.7M1000.9 369.3L953.5 368.5M1001.8 394.7L954.8 405.2M1001.8 394.7L955.3 386.7M999.5 420.2L952.0 423.5M999.5 420.2L954.8 405.2M826.1 532.6L810.0 531.0M837.6 533.1L821.7 531.5M826.1 532.6L837.6 533.1M810.0 531.0L837.6 533.1M810.0 531.0L794.3 527.0M821.7 531.5L806.2 527.6M810.0 531.0L821.7 531.5M810.0 531.0L806.2 527.6M794.3 527.0L779.3 520.6M806.2 527.6L791.5 521.3M794.3 527.0L806.2 527.6M779.3 520.6L806.2 527.6M779.3 520.6L765.4 512.0M791.5 521.3L777.8 512.8M779.3 520.6L791.5 521.3M779.3 520.6L777.8 512.8M765.4 512.0L752.8 501.3M777.8 512.8L765.4 502.3M765.4 512.0L777.8 512.8M752.8 501.3L777.8 512.8M752.8 501.3L741.7 488.6M765.4 502.3L754.5 489.9M752.8 501.3L765.4 502.3M752.8 501.3L754.5 489.9M741.7 488.6L732.3 474.4M754.5 489.9L745.3 475.8M741.7 488.6L754.5 489.9M732.3 474.4L754.5 489.9M732.3 474.4L724.8 458.7M745.3 475.8L737.9 460.4M732.3 474.4L745.3 475.8M732.3 474.4L737.9 460.4M724.8 458.7L719.4 441.9M737.9 460.4L732.6 443.8M724.8 458.7L737.9 460.4M719.4 441.9L737.9 460.4M719.4 441.9L716.1 424.3M732.6 443.8L729.4 426.5M719.4 441.9L732.6 443.8M719.4 441.9L729.4 426.5M716.1 424.3L715.1 406.2M729.4 426.5L728.3 408.8M716.1 424.3L729.4 426.5M715.1 406.2L729.4 426.5M715.1 406.2L716.2 388.0M728.3 408.8L729.5 390.9M715.1 406.2L728.3 408.8M715.1 406.2L729.5 390.9M716.2 388.0L719.6 370.1M729.5 390.9L732.8 373.2M716.2 388.0L729.5 390.9M719.6 370.1L729.5 390.9M719.6 370.1L725.1 352.6M732.8 373.2L738.2 356.1M719.6 370.1L732.8 373.2M719.6 370.1L738.2 356.1M725.1 352.6L732.7 336.1M738.2 356.1L745.6 339.8M725.1 352.6L738.2 356.1M732.7 336.1L738.2 356.1M732.7 336.1L742.1 320.7M745.6 339.8L754.9 324.7M732.7 336.1L745.6 339.8M732.7 336.1L754.9 324.7M742.1 320.7L753.3 306.8M754.9 324.7L765.9 311.0M742.1 320.7L754.9 324.7M753.3 306.8L754.9 324.7M753.3 306.8L766.0 294.6M765.9 311.0L778.4 299.0M753.3 306.8L765.9 311.0M753.3 306.8L778.4 299.0M766.0 294.6L780.0 284.4M778.4 299.0L792.2 289.0M766.0 294.6L778.4 299.0M780.0 284.4L778.4 299.0M780.0 284.4L795.0 276.3M792.2 289.0L806.9 281.0M780.0 284.4L792.2 289.0M780.0 284.4L806.9 281.0M795.0 276.3L810.7 270.5M806.9 281.0L822.4 275.3M795.0 276.3L806.9 281.0M810.7 270.5L806.9 281.0M810.7 270.5L826.9 267.1M822.4 275.3L838.3 271.9M810.7 270.5L822.4 275.3M810.7 270.5L838.3 271.9M826.9 267.1L843.2 266.2M838.3 271.9L854.4 271.0M826.9 267.1L838.3 271.9M843.2 266.2L838.3 271.9M843.2 266.2L859.4 267.7M854.4 271.0L870.2 272.5M843.2 266.2L854.4 271.0M843.2 266.2L870.2 272.5M859.4 267.7L875.1 271.7M870.2 272.5L885.7 276.5M859.4 267.7L870.2 272.5M875.1 271.7L870.2 272.5M875.1 271.7L890.0 278.1M885.7 276.5L900.4 282.8M875.1 271.7L885.7 276.5M875.1 271.7L900.4 282.8M837.6 533.1L821.7 531.5M849.1 533.7L833.4 532.2M837.6 533.1L849.1 533.7M821.7 531.5L849.1 533.7M821.7 531.5L806.2 527.6M833.4 532.2L818.2 528.3M821.7 531.5L833.4 532.2M821.7 531.5L818.2 528.3M806.2 527.6L791.5 521.3M818.2 528.3L803.7 522.1M806.2 527.6L818.2 528.3M791.5 521.3L818.2 528.3M791.5 521.3L777.8 512.8M803.7 522.1L790.3 513.8M791.5 521.3L803.7 522.1M791.5 521.3L790.3 513.8M777.8 512.8L765.4 502.3M790.3 513.8L778.0 503.4M777.8 512.8L790.3 513.8M765.4 502.3L790.3 513.8M765.4 502.3L754.5 489.9M778.0 503.4L767.3 491.2M765.4 502.3L778.0 503.4M765.4 502.3L767.3 491.2M754.5 489.9L745.3 475.8M767.3 491.2L758.2 477.3M754.5 489.9L767.3 491.2M745.3 475.8L767.3 491.2M745.3 475.8L737.9 460.4M758.2 477.3L751.0 462.1M745.3 475.8L758.2 477.3M745.3 475.8L751.0 462.1M737.9 460.4L732.6 443.8M751.0 462.1L745.8 445.9M737.9 460.4L751.0 462.1M732.6 443.8L751.0 462.1M732.6 443.8L729.4 426.5M745.8 445.9L742.6 428.9M732.6 443.8L745.8 445.9M732.6 443.8L742.6 428.9M729.4 426.5L728.3 408.8M742.6 428.9L741.6 411.4M729.4 426.5L742.6 428.9M728.3 408.8L742.6 428.9M728.3 408.8L729.5 390.9M741.6 411.4L742.7 393.8M728.3 408.8L741.6 411.4M728.3 408.8L742.7 393.8M729.5 390.9L732.8 373.2M742.7 393.8L746.0 376.4M729.5 390.9L742.7 393.8M732.8 373.2L742.7 393.8M732.8 373.2L738.2 356.1M746.0 376.4L751.3 359.5M732.8 373.2L746.0 376.4M732.8 373.2L751.3 359.5M738.2 356.1L745.6 339.8M751.3 359.5L758.6 343.5M738.2 356.1L751.3 359.5M745.6 339.8L751.3 359.5M745.6 339.8L754.9 324.7M758.6 343.5L767.8 328.6M745.6 339.8L758.6 343.5M745.6 339.8L767.8 328.6M754.9 324.7L765.9 311.0M767.8 328.6L778.6 315.2M754.9 324.7L767.8 328.6M765.9 311.0L767.8 328.6M765.9 311.0L778.4 299.0M778.6 315.2L790.9 303.4M765.9 311.0L778.6 315.2M765.9 311.0L790.9 303.4M778.4 299.0L792.2 289.0M790.9 303.4L804.4 293.5M778.4 299.0L790.9 303.4M792.2 289.0L790.9 303.4M792.2 289.0L806.9 281.0M804.4 293.5L818.9 285.6M792.2 289.0L804.4 293.5M792.2 289.0L818.9 285.6M806.9 281.0L822.4 275.3M818.9 285.6L834.1 280.0M806.9 281.0L818.9 285.6M822.4 275.3L818.9 285.6M822.4 275.3L838.3 271.9M834.1 280.0L849.8 276.7M822.4 275.3L834.1 280.0M822.4 275.3L849.8 276.7M838.3 271.9L854.4 271.0M849.8 276.7L865.6 275.8M838.3 271.9L849.8 276.7M854.4 271.0L849.8 276.7M854.4 271.0L870.2 272.5M865.6 275.8L881.2 277.3M854.4 271.0L865.6 275.8M854.4 271.0L881.2 277.3M870.2 272.5L885.7 276.5M881.2 277.3L896.4 281.2M870.2 272.5L881.2 277.3M885.7 276.5L881.2 277.3M885.7 276.5L900.4 282.8M896.4 281.2L910.9 287.4M885.7 276.5L896.4 281.2M885.7 276.5L910.9 287.4M969.1 431.4L965.6 443.6M962.7 429.9L959.7 440.7M969.1 431.4L962.7 429.9M965.6 443.6L962.7 429.9M965.6 443.6L961.1 455.5M959.7 440.7L955.7 451.1M965.6 443.6L959.7 440.7M965.6 443.6L955.7 451.1M961.1 455.5L955.6 466.9M955.7 451.1L950.8 461.1M961.1 455.5L955.7 451.1M955.6 466.9L955.7 451.1M955.6 466.9L949.1 477.6M950.8 461.1L945.1 470.6M955.6 466.9L950.8 461.1M955.6 466.9L945.1 470.6M949.1 477.6L941.7 487.7M945.1 470.6L938.6 479.5M949.1 477.6L945.1 470.6M941.7 487.7L945.1 470.6M941.7 487.7L933.6 497.0M938.6 479.5L931.4 487.7M941.7 487.7L938.6 479.5M941.7 487.7L931.4 487.7M933.6 497.0L924.7 505.4M931.4 487.7L923.6 495.1M933.6 497.0L931.4 487.7M924.7 505.4L931.4 487.7M924.7 505.4L915.1 512.8M923.6 495.1L915.1 501.6M924.7 505.4L923.6 495.1M924.7 505.4L915.1 501.6M915.1 512.8L905.0 519.2M915.1 501.6L906.2 507.2M915.1 512.8L915.1 501.6M905.0 519.2L915.1 501.6M905.0 519.2L894.4 524.5M906.2 507.2L896.9 511.9M905.0 519.2L906.2 507.2M905.0 519.2L896.9 511.9M894.4 524.5L883.5 528.6M896.9 511.9L887.3 515.5M894.4 524.5L896.9 511.9M883.5 528.6L896.9 511.9M883.5 528.6L872.3 531.5M887.3 515.5L877.4 518.1M883.5 528.6L887.3 515.5M883.5 528.6L877.4 518.1M872.3 531.5L861.0 533.2M877.4 518.1L867.5 519.6M872.3 531.5L877.4 518.1M861.0 533.2L877.4 518.1M861.0 533.2L849.6 533.7M867.5 519.6L857.5 520.0M861.0 533.2L867.5 519.6M861.0 533.2L857.5 520.0M849.6 533.7L838.4 532.9M857.5 520.0L847.5 519.4M849.6 533.7L857.5 520.0M838.4 532.9L857.5 520.0M838.4 532.9L827.3 530.9M847.5 519.4L837.7 517.6M838.4 532.9L847.5 519.4M838.4 532.9L837.7 517.6M827.3 530.9L816.5 527.7M837.7 517.6L828.2 514.8M827.3 530.9L837.7 517.6M816.5 527.7L837.7 517.6M816.5 527.7L806.0 523.3M828.2 514.8L819.0 510.9M816.5 527.7L828.2 514.8M816.5 527.7L819.0 510.9M806.0 523.3L796.1 517.8M819.0 510.9L810.3 506.0M806.0 523.3L819.0 510.9M796.1 517.8L819.0 510.9M796.1 517.8L786.8 511.1M810.3 506.0L802.0 500.1M796.1 517.8L810.3 506.0M796.1 517.8L802.0 500.1M786.8 511.1L778.1 503.5M802.0 500.1L794.4 493.4M786.8 511.1L802.0 500.1M778.1 503.5L802.0 500.1M778.1 503.5L770.2 494.9M794.4 493.4L787.5 485.8M778.1 503.5L794.4 493.4M778.1 503.5L787.5 485.8M770.2 494.9L763.2 485.4M787.5 485.8L781.2 477.5M770.2 494.9L787.5 485.8M763.2 485.4L787.5 485.8M763.2 485.4L757.0 475.1M781.2 477.5L775.8 468.4M763.2 485.4L781.2 477.5M763.2 485.4L775.8 468.4M757.0 475.1L751.8 464.2M775.8 468.4L771.3 458.8M757.0 475.1L775.8 468.4M751.8 464.2L775.8 468.4M751.8 464.2L747.7 452.7M771.3 458.8L767.6 448.7M751.8 464.2L771.3 458.8M751.8 464.2L767.6 448.7M747.7 452.7L744.6 440.7M767.6 448.7L764.9 438.1M747.7 452.7L767.6 448.7M744.6 440.7L767.6 448.7M744.6 440.7L742.5 428.4M764.9 438.1L763.1 427.3M744.6 440.7L764.9 438.1M744.6 440.7L763.1 427.3M742.5 428.4L741.6 415.9M763.1 427.3L762.3 416.2M742.5 428.4L763.1 427.3M741.6 415.9L763.1 427.3M741.6 415.9L741.8 403.3M762.3 416.2L762.4 405.1M741.6 415.9L762.3 416.2M741.6 415.9L762.4 405.1M741.8 403.3L743.1 390.6M762.4 405.1L763.6 393.9M741.8 403.3L762.4 405.1M743.1 390.6L762.4 405.1M743.1 390.6L745.5 378.1M763.6 393.9L765.7 382.9M743.1 390.6L763.6 393.9M743.1 390.6L765.7 382.9M745.5 378.1L749.0 365.9M765.7 382.9L768.8 372.1M745.5 378.1L765.7 382.9M749.0 365.9L765.7 382.9M749.0 365.9L753.5 354.0M768.8 372.1L772.8 361.7M749.0 365.9L768.8 372.1M749.0 365.9L772.8 361.7M753.5 354.0L759.1 342.6M772.8 361.7L777.6 351.7M753.5 354.0L772.8 361.7M759.1 342.6L772.8 361.7M759.1 342.6L765.5 331.9M777.6 351.7L783.3 342.2M759.1 342.6L777.6 351.7M759.1 342.6L783.3 342.2M765.5 331.9L772.9 321.8M783.3 342.2L789.8 333.3M765.5 331.9L783.3 342.2M772.9 321.8L783.3 342.2M772.9 321.8L781.1 312.5M789.8 333.3L797.0 325.1M772.9 321.8L789.8 333.3M772.9 321.8L797.0 325.1M781.1 312.5L790.0 304.1M797.0 325.1L804.9 317.7M781.1 312.5L797.0 325.1M790.0 304.1L797.0 325.1M790.0 304.1L799.5 296.7M804.9 317.7L813.3 311.2M790.0 304.1L804.9 317.7M790.0 304.1L813.3 311.2M799.5 296.7L809.6 290.3M813.3 311.2L822.2 305.6M799.5 296.7L813.3 311.2M809.6 290.3L813.3 311.2M809.6 290.3L820.2 285.1M822.2 305.6L831.5 300.9M809.6 290.3L822.2 305.6M809.6 290.3L831.5 300.9M820.2 285.1L831.1 280.9M831.5 300.9L841.1 297.3M820.2 285.1L831.5 300.9M831.1 280.9L831.5 300.9M831.1 280.9L842.3 278.0M841.1 297.3L851.0 294.7M831.1 280.9L841.1 297.3M831.1 280.9L851.0 294.7M842.3 278.0L853.6 276.3M851.0 294.7L861.0 293.2M842.3 278.0L851.0 294.7M853.6 276.3L851.0 294.7M853.6 276.3L865.0 275.8M861.0 293.2L871.0 292.8M853.6 276.3L861.0 293.2M853.6 276.3L871.0 292.8M865.0 275.8L876.3 276.6M871.0 292.8L880.9 293.4M865.0 275.8L871.0 292.8M876.3 276.6L871.0 292.8M876.3 276.6L887.4 278.6M880.9 293.4L890.7 295.2M876.3 276.6L880.9 293.4M876.3 276.6L890.7 295.2M887.4 278.6L898.2 281.8M890.7 295.2L900.2 298.0M887.4 278.6L890.7 295.2M898.2 281.8L890.7 295.2M898.2 281.8L908.6 286.2M900.2 298.0L909.4 301.9M898.2 281.8L900.2 298.0M898.2 281.8L909.4 301.9M908.6 286.2L918.5 291.7M909.4 301.9L918.2 306.8M908.6 286.2L909.4 301.9M918.5 291.7L909.4 301.9M918.5 291.7L927.9 298.4M918.2 306.8L926.4 312.7M918.5 291.7L918.2 306.8M918.5 291.7L926.4 312.7M927.9 298.4L936.5 306.0M926.4 312.7L934.0 319.4M927.9 298.4L926.4 312.7M936.5 306.0L926.4 312.7M936.5 306.0L944.4 314.6M934.0 319.4L941.0 327.0M936.5 306.0L934.0 319.4M936.5 306.0L941.0 327.0M944.4 314.6L951.5 324.1M941.0 327.0L947.2 335.3M944.4 314.6L941.0 327.0M951.5 324.1L941.0 327.0M951.5 324.1L957.6 334.4M947.2 335.3L952.6 344.4M951.5 324.1L947.2 335.3M951.5 324.1L952.6 344.4M957.6 334.4L962.8 345.3M952.6 344.4L957.2 354.0M957.6 334.4L952.6 344.4M962.8 345.3L952.6 344.4M962.8 345.3L967.0 356.8M957.2 354.0L960.8 364.1M962.8 345.3L957.2 354.0M962.8 345.3L960.8 364.1M967.0 356.8L970.1 368.8M960.8 364.1L963.6 374.7M967.0 356.8L960.8 364.1M970.1 368.8L960.8 364.1M970.1 368.8L972.1 381.1M963.6 374.7L965.4 385.5M970.1 368.8L963.6 374.7M970.1 368.8L965.4 385.5M972.1 381.1L973.0 393.6M965.4 385.5L966.2 396.6M972.1 381.1L965.4 385.5M973.0 393.6L965.4 385.5M973.0 393.6L972.8 406.3M966.2 396.6L966.0 407.7M973.0 393.6L966.2 396.6M973.0 393.6L966.0 407.7M972.8 406.3L971.5 418.9M966.0 407.7L964.9 418.9M972.8 406.3L966.0 407.7M971.5 418.9L966.0 407.7M971.5 418.9L969.1 431.4M964.9 418.9L962.7 429.9M971.5 418.9L964.9 418.9M971.5 418.9L962.7 429.9M864.8 455.6L847.8 453.1M788.4 435.0L787.3 425.8M841.1 297.3L851.0 321.6M915.1 501.6L906.2 507.2M813.3 311.2L822.2 305.6M787.3 425.8L792.4 418.1M779.1 409.8L798.8 403.0M822.2 305.6L831.5 300.9M832.5 373.9L846.8 362.2M798.8 403.0L805.9 368.5M909.4 301.9L892.5 315.5M762.4 405.1L779.1 409.8M857.5 520.0L847.5 519.4M846.8 362.2L863.7 357.2M845.3 345.5L838.6 340.3M786.7 377.4L798.8 403.0M763.6 393.9L786.7 377.4M847.5 519.4L837.7 517.6M880.9 293.4L890.7 295.2M934.0 319.4L914.3 329.2M890.9 481.7L889.8 472.5M838.6 340.3L837.5 331.1M895.1 369.3L925.1 374.2M890.7 295.2L900.2 298.0M941.2 387.0L936.0 394.7M936.0 394.7L927.7 396.4M764.9 438.1L779.8 439.6M962.7 429.9L944.1 429.8M787.5 485.8L781.2 477.5M913.1 480.7L893.4 494.3M947.2 335.3L952.6 344.4M808.5 430.9L807.4 421.7M914.3 329.2L902.9 341.6M789.8 333.3L813.4 335.6M887.3 515.5L885.8 489.5M965.4 385.5L950.4 400.5M877.4 518.1L877.5 491.2M768.8 372.1L786.7 377.4M905.3 422.2L932.4 407.8M794.4 493.4L787.5 485.8M930.4 458.9L913.1 480.7M792.4 418.1L779.1 409.8M923.6 495.1L913.1 480.7M941.0 327.0L947.2 335.3M851.0 321.6L862.4 310.7M863.7 357.2L853.6 343.8M851.0 294.7L862.4 310.7M763.1 427.3L762.3 416.2M890.9 481.7L885.8 489.5M905.3 422.2L920.3 443.2M847.8 453.1L869.7 476.7M789.8 333.3L798.2 351.6M762.3 416.2L762.4 405.1M966.2 396.6L966.0 407.7M779.1 409.8L786.7 377.4M795.0 440.3L779.8 439.6M877.5 491.2L867.2 501.1M955.7 451.1L950.8 461.1M819.0 510.9L812.6 488.0M966.0 407.7L964.9 418.9M883.2 467.3L889.8 472.5M813.3 311.2L813.4 335.6M870.8 485.9L840.9 497.0M950.8 461.1L945.1 470.6M777.6 351.7L783.3 342.2M822.2 305.6L836.6 315.9M892.5 315.5L914.3 329.2M837.5 331.1L813.4 335.6M952.6 344.4L933.4 372.5M783.3 342.2L789.8 333.3M847.8 453.1L833.3 443.5M914.3 329.2L930.6 344.9M842.6 323.3L836.6 315.9M957.2 354.0L940.1 377.8M857.5 520.0L867.2 501.1M803.4 438.6L826.0 473.7M833.3 443.5L823.5 428.3M792.4 418.1L800.7 416.4M896.9 511.9L887.3 515.5M964.9 418.9L944.1 429.8M800.7 416.4L807.4 421.7M964.9 418.9L950.4 400.5M863.7 357.2L858.7 336.1M841.1 297.3L851.0 294.7M925.1 374.2L902.9 341.6M880.7 359.7L895.1 369.3M880.9 293.4L862.4 310.7M795.0 440.3L797.4 467.5M820.0 409.7L800.7 416.4M890.7 295.2L892.5 315.5M944.1 429.8L950.4 400.5M794.4 493.4L797.4 467.5M771.3 458.8L795.0 440.3M906.2 507.2L896.9 511.9M918.2 306.8L914.3 329.2M908.5 403.1L921.1 391.1M831.5 300.9L841.1 297.3M828.2 514.8L840.9 497.0M863.7 357.2L880.7 359.7M798.2 351.6L805.9 368.5M837.7 517.6L828.2 514.8M941.0 327.0L930.6 344.9M846.8 362.2L838.6 340.3M837.5 331.1L842.6 323.3M900.2 298.0L909.4 301.9M842.6 323.3L851.0 321.6M909.4 301.9L918.2 306.8M927.7 396.4L921.1 391.1M947.2 335.3L930.6 344.9M797.4 467.5L826.0 473.7M763.1 427.3L779.1 409.8M895.1 369.3L902.9 341.6M781.2 477.5L775.8 468.4M921.1 391.1L920.0 381.9M794.4 493.4L812.6 488.0M775.8 468.4L771.3 458.8M952.6 344.4L957.2 354.0M905.3 422.2L908.5 403.1M867.2 501.1L840.9 497.0M955.7 451.1L930.4 458.9M925.1 374.2L930.6 344.9M957.2 354.0L960.8 364.1M885.8 489.5L877.5 491.2M775.8 468.4L797.4 467.5M762.4 405.1L763.6 393.9M908.5 403.1L927.7 396.4M877.5 491.2L870.8 485.9M763.6 393.9L765.7 382.9M858.7 336.1L857.6 326.9M798.2 351.6L813.4 335.6M936.0 394.7L932.4 407.8M905.3 422.2L895.9 438.9M881.7 450.6L874.9 469.0M846.8 362.2L845.3 345.5M938.6 479.5L931.4 487.7M904.9 384.5L925.1 374.2M959.7 440.7L944.1 429.8M803.4 438.6L795.0 440.3M777.6 351.7L798.2 351.6M857.6 326.9L892.5 315.5M763.1 427.3L779.8 439.6M941.2 387.0L950.4 400.5M786.7 377.4L798.2 351.6M763.6 393.9L779.1 409.8M945.1 470.6L930.4 458.9M765.7 382.9L786.7 377.4M950.4 400.5L932.4 407.8M838.6 340.3L805.9 368.5M938.6 479.5L930.4 458.9M945.1 470.6L938.6 479.5M915.1 501.6L893.4 494.3M966.2 396.6L950.4 400.5M789.8 333.3L797.0 325.1M846.8 362.2L853.6 343.8M823.5 428.3L820.0 409.7M904.9 384.5L920.0 381.9M963.6 374.7L941.2 387.0M777.6 351.7L786.7 377.4M887.3 515.5L877.4 518.1M930.6 344.9L902.9 341.6M797.0 325.1L813.4 335.6M851.0 294.7L861.0 293.2M887.3 515.5L893.4 494.3M889.8 472.5L913.1 480.7M804.9 317.7L813.4 335.6M877.4 518.1L867.2 501.1M808.5 430.9L803.4 438.6M819.0 510.9L810.3 506.0M772.8 361.7L786.7 377.4M838.6 340.3L813.4 335.6M788.4 435.0L779.8 439.6M880.7 359.7L892.5 315.5M847.5 519.4L840.9 497.0M847.8 453.1L826.0 473.7M833.3 443.5L803.4 438.6M930.4 458.9L920.3 443.2M851.0 321.6L836.6 315.9M915.1 501.6L913.1 480.7M831.5 300.9L836.6 315.9M925.1 374.2L933.4 372.5M913.1 480.7L920.3 443.2M823.1 390.6L805.9 368.5M895.9 438.9L889.8 472.5M861.0 293.2L862.4 310.7M880.7 359.7L858.7 336.1M812.6 488.0L797.4 467.5M890.9 481.7L893.4 494.3M895.1 369.3L904.9 384.5M895.9 438.9L920.3 443.2M819.0 510.9L840.9 497.0M792.4 418.1L798.8 403.0M851.0 321.6L857.6 326.9M870.8 485.9L867.2 501.1M918.2 306.8L926.4 312.7M810.3 506.0L812.6 488.0M889.8 472.5L920.3 443.2M787.5 485.8L797.4 467.5M957.2 354.0L933.4 372.5M941.2 387.0L940.1 377.8M960.8 364.1L940.1 377.8M847.5 519.4L867.2 501.1M900.2 298.0L892.5 315.5M820.0 409.7L798.8 403.0M771.3 458.8L767.6 448.7M926.4 312.7L914.3 329.2M828.2 514.8L819.0 510.9M771.3 458.8L779.8 439.6M934.0 319.4L930.6 344.9M840.9 497.0L826.0 473.7M847.8 453.1L840.9 497.0M767.6 448.7L779.8 439.6M920.0 381.9L925.1 374.2M851.0 294.7L851.0 321.6M892.5 315.5L902.9 341.6M840.9 497.0L812.6 488.0M952.6 344.4L930.6 344.9M960.8 364.1L963.6 374.7M962.7 429.9L964.9 418.9M870.8 485.9L869.7 476.7M908.5 403.1L932.4 407.8M887.3 515.5L877.5 491.2M765.7 382.9L768.8 372.1M813.4 335.6L836.6 315.9M813.4 335.6L805.9 368.5M895.9 438.9L881.7 450.6M931.4 487.7L923.6 495.1M795.0 440.3L788.4 435.0M804.9 317.7L813.3 311.2M762.3 416.2L779.1 409.8M927.7 396.4L932.4 407.8M823.1 390.6L832.5 373.9M955.7 451.1L944.1 429.8M823.5 428.3L807.4 421.7M950.8 461.1L930.4 458.9M933.4 372.5L930.6 344.9M920.3 443.2L932.4 407.8M931.4 487.7L913.1 480.7M813.3 311.2L836.6 315.9M797.0 325.1L804.9 317.7M837.5 331.1L836.6 315.9M864.8 455.6L874.9 469.0M820.0 409.7L823.1 390.6M783.3 342.2L798.2 351.6M857.6 326.9L862.4 310.7M877.4 518.1L867.5 519.6M906.2 507.2L893.4 494.3M858.7 336.1L853.6 343.8M965.4 385.5L941.2 387.0M867.5 519.6L857.5 520.0M944.1 429.8L932.4 407.8M861.0 293.2L871.0 292.8M936.0 394.7L950.4 400.5M853.6 343.8L845.3 345.5M896.9 511.9L893.4 494.3M871.0 292.8L880.9 293.4M904.9 384.5L908.5 403.1M810.3 506.0L802.0 500.1M803.4 438.6L797.4 467.5M885.8 489.5L893.4 494.3M787.3 425.8L779.1 409.8M869.7 476.7L840.9 497.0M880.9 293.4L892.5 315.5M802.0 500.1L794.4 493.4M926.4 312.7L934.0 319.4M820.0 409.7L807.4 421.7M944.1 429.8L930.4 458.9M931.4 487.7L930.4 458.9M944.1 429.8L920.3 443.2M858.7 336.1L892.5 315.5M934.0 319.4L941.0 327.0M966.0 407.7L950.4 400.5M767.6 448.7L764.9 438.1M933.4 372.5L940.1 377.8M904.9 384.5L921.1 391.1M841.1 297.3L836.6 315.9M864.8 455.6L869.7 476.7M837.7 517.6L840.9 497.0M764.9 438.1L763.1 427.3M823.5 428.3L803.4 438.6M763.1 427.3L787.3 425.8M965.4 385.5L966.2 396.6M959.7 440.7L955.7 451.1M832.5 373.9L838.6 340.3M874.9 469.0L883.2 467.3M832.5 373.9L805.9 368.5M881.7 450.6L889.8 472.5M775.8 468.4L795.0 440.3M862.4 310.7L892.5 315.5M867.5 519.6L867.2 501.1M812.6 488.0L826.0 473.7M880.7 359.7L902.9 341.6M787.3 425.8L779.8 439.6M833.3 443.5L826.0 473.7M909.4 301.9L914.3 329.2M786.7 377.4L805.9 368.5M781.2 477.5L797.4 467.5M823.1 390.6L798.8 403.0M963.6 374.7L965.4 385.5M890.9 481.7L913.1 480.7M962.7 429.9L959.7 440.7M963.6 374.7L940.1 377.8M823.5 428.3L808.5 430.9M871.0 292.8L862.4 310.7M869.7 476.7L874.9 469.0M768.8 372.1L772.8 361.7M800.7 416.4L798.8 403.0M772.8 361.7L777.6 351.7M881.7 450.6L864.8 455.6M802.0 500.1L812.6 488.0M923.6 495.1L915.1 501.6M881.7 450.6L883.2 467.3" fill="none" stroke="#080604" stroke-width="1" shape-rendering="crispEdges"/><path d="M907.0 416.6L905.6 421.3L903.9 425.8L901.8 430.2L899.3 434.3L896.5 438.1L893.4 441.7L890.0 444.9L886.3 447.7L882.5 450.2L878.4 452.2L874.2 453.8L870.0 454.9L865.6 455.5L861.3 455.7L857.0 455.4L852.7 454.6L848.6 453.4L844.6 451.7L840.8 449.6L837.2 447.1L833.9 444.2L830.9 440.9L828.2 437.2L825.9 433.3L823.9 429.1L822.3 424.7L821.1 420.2L820.3 415.5L820.0 410.7L820.1 405.8L820.6 401.0L821.5 396.2L822.8 391.5L824.5 387.0L826.6 382.6L829.1 378.5L831.9 374.7L835.1 371.1L838.5 367.9L842.1 365.1L846.0 362.6L850.0 360.6L854.2 359.0L858.5 357.9L862.8 357.3L867.2 357.1L871.5 357.4L875.7 358.2L879.9 359.4L883.8 361.1L887.6 363.2L891.2 365.7L894.5 368.6L897.5 371.9L900.2 375.6L902.6 379.5L904.6 383.7L906.2 388.1L907.3 392.6L908.1 397.3L908.5 402.1L908.4 407.0L907.9 411.8Z" fill="#3e3028" stroke="#000" stroke-width="1.1"/><g clip-path="url(#hc0)"><path d="M904.0 415.9L902.7 420.6L901.0 425.1L898.9 429.5L896.4 433.6L893.6 437.4L890.4 441.0L887.0 444.2L883.4 447.0L879.5 449.5L875.5 451.5L871.3 453.1L867.0 454.2L862.7 454.8L858.4 455.0L854.0 454.7L849.8 454.0L845.7 452.7L841.7 451.0L837.9 448.9L834.3 446.4L831.0 443.5L828.0 440.2L825.3 436.5L822.9 432.6L821.0 428.4L819.4 424.0L818.2 419.5L817.4 414.8L817.0 410.0L817.1 405.1L817.6 400.3L818.5 395.5L819.9 390.8L821.6 386.3L823.7 381.9L826.2 377.8L829.0 374.0L832.1 370.4L835.5 367.2L839.2 364.4L843.1 361.9L847.1 359.9L851.3 358.3L855.5 357.2L859.9 356.6L864.2 356.4L868.5 356.7L872.8 357.5L876.9 358.7L880.9 360.4L884.7 362.5L888.3 365.0L891.6 367.9L894.6 371.2L897.3 374.9L899.6 378.8L901.6 383.0L903.2 387.4L904.4 391.9L905.2 396.6L905.5 401.4L905.5 406.3L905.0 411.1Z" fill="url(#bgg)" stroke="#1a1410" stroke-width=".8"/></g><path d="M941.2 387.0L940.8 388.1L940.4 389.3L939.9 390.3L939.3 391.4L938.6 392.3L937.8 393.2L937.0 394.0L936.0 394.7L935.1 395.3L934.1 395.8L933.1 396.2L932.0 396.5L930.9 396.6L929.8 396.7L928.8 396.6L927.7 396.4L926.7 396.1L925.7 395.7L924.8 395.2L923.9 394.5L923.1 393.8L922.3 393.0L921.6 392.1L921.1 391.1L920.6 390.1L920.2 389.0L919.9 387.9L919.7 386.7L919.6 385.5L919.6 384.3L919.7 383.1L920.0 381.9L920.3 380.8L920.7 379.6L921.3 378.6L921.9 377.5L922.6 376.6L923.3 375.7L924.2 374.9L925.1 374.2L926.0 373.6L927.0 373.1L928.1 372.7L929.1 372.4L930.2 372.3L931.3 372.2L932.4 372.3L933.4 372.5L934.4 372.8L935.4 373.2L936.4 373.7L937.3 374.4L938.1 375.1L938.8 375.9L939.5 376.8L940.1 377.8L940.6 378.8L941.0 379.9L941.3 381.0L941.5 382.2L941.5 383.4L941.5 384.6L941.4 385.8Z" fill="#3e3028" stroke="#000" stroke-width="1.1"/><g clip-path="url(#hc1)"><path d="M938.2 386.3L937.9 387.4L937.5 388.6L937.0 389.6L936.3 390.7L935.6 391.6L934.9 392.5L934.0 393.3L933.1 394.0L932.2 394.6L931.2 395.1L930.1 395.5L929.1 395.8L928.0 395.9L926.9 396.0L925.8 395.9L924.8 395.7L923.8 395.4L922.8 395.0L921.8 394.5L920.9 393.8L920.1 393.1L919.4 392.3L918.7 391.4L918.1 390.4L917.6 389.4L917.2 388.3L916.9 387.2L916.8 386.0L916.7 384.8L916.7 383.6L916.8 382.4L917.0 381.2L917.4 380.1L917.8 378.9L918.3 377.9L918.9 376.8L919.6 375.9L920.4 375.0L921.3 374.2L922.2 373.5L923.1 372.9L924.1 372.4L925.2 372.0L926.2 371.7L927.3 371.6L928.4 371.5L929.4 371.6L930.5 371.8L931.5 372.1L932.5 372.5L933.4 373.0L934.3 373.7L935.1 374.4L935.9 375.2L936.6 376.1L937.1 377.1L937.6 378.1L938.0 379.2L938.3 380.3L938.5 381.5L938.6 382.7L938.6 383.9L938.5 385.1Z" fill="url(#bgg)" stroke="#1a1410" stroke-width=".8"/></g><path d="M890.9 481.7L890.6 482.9L890.2 484.0L889.7 485.1L889.0 486.1L888.3 487.1L887.6 488.0L886.7 488.8L885.8 489.5L884.9 490.1L883.9 490.6L882.8 491.0L881.8 491.2L880.7 491.4L879.6 491.4L878.5 491.4L877.5 491.2L876.5 490.9L875.5 490.5L874.5 489.9L873.6 489.3L872.8 488.6L872.1 487.8L871.4 486.9L870.8 485.9L870.3 484.9L869.9 483.8L869.6 482.6L869.4 481.5L869.4 480.3L869.4 479.1L869.5 477.9L869.7 476.7L870.1 475.5L870.5 474.4L871.0 473.3L871.6 472.3L872.3 471.4L873.1 470.5L873.9 469.7L874.9 469.0L875.8 468.4L876.8 467.9L877.9 467.5L878.9 467.2L880.0 467.0L881.1 467.0L882.1 467.1L883.2 467.3L884.2 467.6L885.2 468.0L886.1 468.5L887.0 469.1L887.8 469.9L888.6 470.7L889.3 471.6L889.8 472.5L890.3 473.6L890.7 474.7L891.0 475.8L891.2 477.0L891.3 478.2L891.3 479.4L891.2 480.6Z" fill="#3e3028" stroke="#000" stroke-width="1.1"/><g clip-path="url(#hc2)"><path d="M888.0 481.0L887.7 482.2L887.2 483.3L886.7 484.4L886.1 485.4L885.4 486.4L884.6 487.3L883.8 488.1L882.9 488.8L881.9 489.4L880.9 489.9L879.9 490.3L878.8 490.5L877.8 490.7L876.7 490.7L875.6 490.7L874.6 490.5L873.5 490.2L872.5 489.8L871.6 489.2L870.7 488.6L869.9 487.9L869.1 487.1L868.5 486.2L867.9 485.2L867.4 484.2L867.0 483.1L866.7 481.9L866.5 480.8L866.4 479.6L866.4 478.4L866.6 477.2L866.8 476.0L867.1 474.8L867.6 473.7L868.1 472.6L868.7 471.6L869.4 470.7L870.2 469.8L871.0 469.0L871.9 468.3L872.9 467.7L873.9 467.2L874.9 466.8L876.0 466.5L877.1 466.3L878.1 466.3L879.2 466.4L880.3 466.6L881.3 466.9L882.3 467.3L883.2 467.8L884.1 468.4L884.9 469.2L885.7 470.0L886.3 470.9L886.9 471.8L887.4 472.9L887.8 474.0L888.1 475.1L888.3 476.3L888.4 477.5L888.4 478.7L888.2 479.9Z" fill="url(#bgg)" stroke="#1a1410" stroke-width=".8"/></g><path d="M808.5 430.9L808.1 432.0L807.7 433.2L807.2 434.2L806.6 435.3L805.9 436.2L805.1 437.1L804.3 437.9L803.4 438.6L802.4 439.2L801.4 439.7L800.4 440.1L799.3 440.4L798.2 440.5L797.1 440.6L796.1 440.5L795.0 440.3L794.0 440.0L793.0 439.6L792.1 439.1L791.2 438.4L790.4 437.7L789.6 436.9L788.9 436.0L788.4 435.0L787.9 434.0L787.5 432.9L787.2 431.8L787.0 430.6L786.9 429.4L786.9 428.2L787.0 427.0L787.3 425.8L787.6 424.7L788.0 423.5L788.6 422.5L789.2 421.4L789.9 420.5L790.6 419.6L791.5 418.8L792.4 418.1L793.4 417.5L794.4 417.0L795.4 416.6L796.5 416.3L797.5 416.2L798.6 416.1L799.7 416.2L800.7 416.4L801.7 416.7L802.7 417.1L803.7 417.6L804.6 418.3L805.4 419.0L806.1 419.8L806.8 420.7L807.4 421.7L807.9 422.7L808.3 423.8L808.6 424.9L808.8 426.1L808.8 427.3L808.8 428.5L808.7 429.7Z" fill="#3e3028" stroke="#000" stroke-width="1.1"/><g clip-path="url(#hc3)"><path d="M805.5 430.2L805.2 431.3L804.8 432.5L804.3 433.6L803.6 434.6L802.9 435.5L802.2 436.4L801.3 437.2L800.4 437.9L799.5 438.5L798.5 439.0L797.4 439.4L796.4 439.7L795.3 439.8L794.2 439.9L793.1 439.8L792.1 439.6L791.1 439.3L790.1 438.9L789.1 438.4L788.3 437.7L787.4 437.0L786.7 436.2L786.0 435.3L785.4 434.3L784.9 433.3L784.5 432.2L784.2 431.1L784.1 429.9L784.0 428.7L784.0 427.5L784.1 426.3L784.3 425.1L784.7 424.0L785.1 422.8L785.6 421.8L786.2 420.7L786.9 419.8L787.7 418.9L788.6 418.1L789.5 417.4L790.4 416.8L791.4 416.3L792.5 415.9L793.5 415.6L794.6 415.5L795.7 415.4L796.7 415.5L797.8 415.7L798.8 416.0L799.8 416.4L800.7 416.9L801.6 417.6L802.5 418.3L803.2 419.1L803.9 420.0L804.5 421.0L804.9 422.0L805.3 423.1L805.6 424.2L805.8 425.4L805.9 426.6L805.9 427.8L805.8 429.0Z" fill="url(#bgg)" stroke="#1a1410" stroke-width=".8"/></g><path d="M858.7 336.1L858.4 337.3L858.0 338.4L857.4 339.5L856.8 340.5L856.1 341.4L855.3 342.3L854.5 343.1L853.6 343.8L852.6 344.4L851.6 344.9L850.6 345.3L849.5 345.6L848.5 345.8L847.4 345.8L846.3 345.7L845.3 345.5L844.2 345.2L843.2 344.8L842.3 344.3L841.4 343.7L840.6 342.9L839.8 342.1L839.2 341.2L838.6 340.3L838.1 339.2L837.7 338.1L837.4 337.0L837.2 335.8L837.1 334.6L837.2 333.4L837.3 332.2L837.5 331.1L837.8 329.9L838.3 328.8L838.8 327.7L839.4 326.7L840.1 325.7L840.9 324.8L841.7 324.0L842.6 323.3L843.6 322.7L844.6 322.2L845.6 321.8L846.7 321.6L847.8 321.4L848.8 321.4L849.9 321.4L851.0 321.6L852.0 321.9L853.0 322.3L853.9 322.9L854.8 323.5L855.6 324.2L856.4 325.0L857.0 325.9L857.6 326.9L858.1 327.9L858.5 329.0L858.8 330.2L859.0 331.3L859.1 332.5L859.1 333.7L858.9 334.9Z" fill="#3e3028" stroke="#000" stroke-width="1.1"/><g clip-path="url(#hc4)"><path d="M855.8 335.4L855.4 336.6L855.0 337.7L854.5 338.8L853.9 339.8L853.2 340.8L852.4 341.6L851.6 342.4L850.7 343.1L849.7 343.7L848.7 344.2L847.7 344.6L846.6 344.9L845.5 345.1L844.4 345.1L843.4 345.0L842.3 344.8L841.3 344.5L840.3 344.1L839.4 343.6L838.5 343.0L837.7 342.2L836.9 341.4L836.2 340.5L835.7 339.6L835.2 338.5L834.8 337.4L834.5 336.3L834.3 335.1L834.2 333.9L834.2 332.7L834.3 331.5L834.6 330.4L834.9 329.2L835.3 328.1L835.9 327.0L836.5 326.0L837.2 325.0L837.9 324.1L838.8 323.3L839.7 322.6L840.7 322.0L841.7 321.5L842.7 321.1L843.8 320.9L844.8 320.7L845.9 320.7L847.0 320.7L848.0 320.9L849.1 321.2L850.0 321.6L851.0 322.2L851.9 322.8L852.7 323.5L853.4 324.3L854.1 325.2L854.7 326.2L855.2 327.2L855.6 328.3L855.9 329.5L856.1 330.6L856.1 331.8L856.1 333.0L856.0 334.2Z" fill="url(#bgg)" stroke="#1a1410" stroke-width=".8"/></g></svg>
<div class="a" style="left:721px;top:639.5px;width:251px;height:10px;background:#fff;border:1px solid #000;box-sizing:border-box;"></div><div class="a" style="left:721px;top:639.5px;width:63px;height:10px;background:#000;"></div><div class="a" style="left:846px;top:639.5px;width:63px;height:10px;background:#000;"></div><div class="t" style="left:707.80px;top:623.5px;font-size:13px;transform:scaleX(0.9880);line-height:15px;height:15px;color:#111;">0.00</div>
<div class="t" style="left:827.00px;top:623.5px;font-size:13px;transform:scaleX(0.9325);line-height:15px;height:15px;color:#111;">100.00</div>
<div class="t" style="left:952.30px;top:623.5px;font-size:13px;transform:scaleX(0.9757);line-height:15px;height:15px;color:#111;">200.00 (mm)</div>
<div class="t" style="left:767.30px;top:652.5px;font-size:13px;transform:scaleX(0.9303);line-height:15px;height:15px;color:#111;">50.00</div>
<div class="t" style="left:890.00px;top:652.5px;font-size:13px;transform:scaleX(0.9250);line-height:15px;height:15px;color:#111;">150.00</div>
<svg style="left:0;top:0" width="1362" height="724" viewBox="0 0 1362 724">
<defs><radialGradient id="gCy" cx="40%" cy="35%" r="70%"><stop offset="0" stop-color="#7af0f0"/><stop offset=".6" stop-color="#20c4cc"/><stop offset="1" stop-color="#0a8c98"/></radialGradient>
<radialGradient id="gRd" cx="40%" cy="35%" r="70%"><stop offset="0" stop-color="#f04040"/><stop offset="1" stop-color="#c00808"/></radialGradient></defs>
<path d="M1281 611L1263.5 606.5" stroke="#c01010" stroke-width="3.4" stroke-linecap="round"/>
<circle cx="1262" cy="606.8" r="5.4" fill="url(#gRd)"/>
<path d="M1281.2 611.3L1321 598.8" stroke="#1010d0" stroke-width="3.4"/>
<path d="M1333.2 595.2L1318 592.6L1321.4 605.4Z" fill="#1010d0"/>
<path d="M1280.6 611.4L1272.6 569" stroke="#0e7a18" stroke-width="3.8"/>
<path d="M1269.8 556.6L1266.4 571.4L1278.6 569.2Z" fill="#109020"/>
<circle cx="1288" cy="575" r="6" fill="url(#gCy)"/>
<path d="M1267.4 539.2L1270.7 543.4L1274 539.2M1270.7 543.4V547.6" stroke="#18a048" stroke-width="1" fill="none"/>
<path d="M1251 596.4L1258 604.6M1258 596.4L1251 604.6" stroke="#d02020" stroke-width="1"/>
<path d="M1340.4 584.8H1347L1340.4 592.6H1347.2" stroke="#1818c0" stroke-width="1" fill="none"/>
</svg>
<div class="a" style="left:330px;top:685px;width:1032px;height:1px;background:#000;"></div><div class="a" style="left:330px;top:686px;width:1032px;height:15px;background:#e7e4e0;"></div><div class="a" style="left:330px;top:701px;width:1032px;height:1px;background:#000;"></div><svg style="left:0;top:0" width="1362" height="724" viewBox="0 0 1362 724">
<path d="M330 684.4H405.6L398.6 701H338L331 686Z" fill="#fdfdff"/>
<path d="M330.8 685.6L338 701M398.6 701L405.6 685.6M401.6 693.4L406 700.8M480.4 685.6L487.6 700.8M479.6 700.8L483.6 693M571 700.8L578.2 685.6" stroke="#000" stroke-width="1.1" fill="none"/>
</svg>
<div class="t b" style="left:341.00px;top:687px;transform:scaleX(0.9875);">Geometry</div>
<div class="t" style="left:409.50px;top:687px;transform:scaleX(0.9592);">Print Preview</div>
<div class="t" style="left:490.80px;top:687px;transform:scaleX(0.9512);">Report Preview</div>
<div class="a" style="left:0;top:702px;width:1362px;height:6px;background:#fbfaf9;"></div><div class="a" style="left:0;top:708px;width:1362px;height:1px;background:#a09c98;"></div><div class="a" style="left:0px;top:709px;width:369px;height:15px;border-left:1px solid #a09c98;border-top:1px solid #a09c98;border-right:1px solid #fff;box-sizing:border-box;"></div><div class="a" style="left:371px;top:709px;width:174px;height:15px;border-left:1px solid #a09c98;border-top:1px solid #a09c98;border-right:1px solid #fff;box-sizing:border-box;"></div><div class="a" style="left:547px;top:709px;width:148px;height:15px;border-left:1px solid #a09c98;border-top:1px solid #a09c98;border-right:1px solid #fff;box-sizing:border-box;"></div><div class="a" style="left:697px;top:709px;width:328px;height:15px;border-left:1px solid #a09c98;border-top:1px solid #a09c98;border-right:1px solid #fff;box-sizing:border-box;"></div><div class="a" style="left:1027px;top:709px;width:318px;height:15px;border-left:1px solid #a09c98;border-top:1px solid #a09c98;border-right:1px solid #fff;box-sizing:border-box;"></div><div class="t" style="left:3.50px;top:711px;transform:scaleX(0.9202);">Press F1 for Help</div>
<svg style="left:550px;top:710px" width="16" height="14" viewBox="0 0 16 14"><path d="M1 3.4Q1 1.4 3 1.4H13Q15 1.4 15 3.4V8.6Q15 10.6 13 10.6H7L3.4 13.6V10.6H3Q1 10.6 1 8.6Z" fill="#f8e440" stroke="#c0a010" stroke-width=".9"/><text x="7.4" y="9.8" font-family="Liberation Sans" font-size="11" font-weight="bold" fill="#000">0</text></svg>
<div class="t" style="left:570.50px;top:711px;transform:scaleX(0.9521);">No Messages</div>
<div class="t" style="left:700.50px;top:711px;transform:scaleX(0.9706);">No Selection</div>
<div class="t" style="left:1029.00px;top:711px;transform:scaleX(1.0019);">Metric (mm, kg, N, s, mV, mA)</div>
<div class="t" style="left:1202.00px;top:711px;transform:scaleX(0.9178);">Degrees</div>
<div class="t" style="left:1256.00px;top:711px;transform:scaleX(0.9778);">rad/s</div>
<div class="t" style="left:1295.00px;top:711px;transform:scaleX(0.9231);">Celsius</div>
<svg style="left:1347px;top:710px" width="14" height="14" viewBox="0 0 14 14"><path d="M13 1L1 13M13 5L5 13M13 9L9 13" stroke="#a8a4a0" stroke-width="1.4"/><path d="M14 2L2 14M14 6L6 14M14 10L10 14" stroke="#fff" stroke-width="1"/></svg>
</body></html>
